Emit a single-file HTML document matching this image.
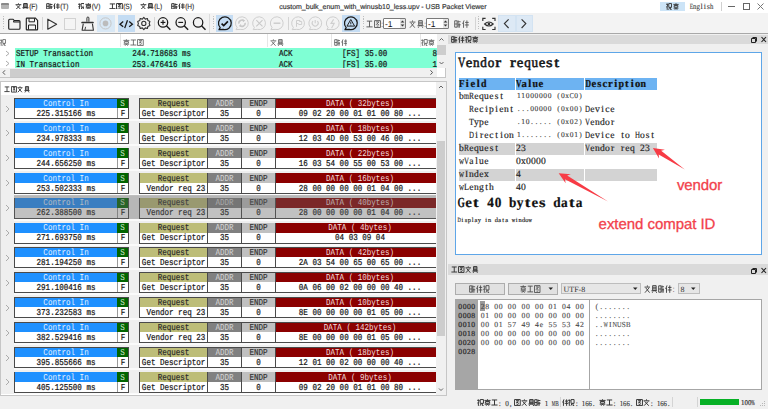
<!DOCTYPE html><html><head><meta charset="utf-8"><style>
*{margin:0;padding:0;box-sizing:border-box}
html,body{width:768px;height:409px;overflow:hidden;background:#f0f0f0;font-family:"Liberation Sans",sans-serif;position:relative;text-rendering:geometricPrecision}
.ab{position:absolute}
.tx{white-space:pre}
.cj{opacity:.8;background:
  linear-gradient(var(--c),var(--c)) 0 10%/100% 1px no-repeat,
  linear-gradient(var(--c),var(--c)) 0 50%/100% 1px no-repeat,
  linear-gradient(var(--c),var(--c)) 0 100%/100% 1px no-repeat,
  linear-gradient(var(--c),var(--c)) 15% 0/1px 100% no-repeat,
  linear-gradient(var(--c),var(--c)) 55% 0/1px 100% no-repeat,
  linear-gradient(var(--c),var(--c)) 90% 0/1px 100% no-repeat}
</style></head><body>
<div class="ab" style="left:0px;top:0px;width:768px;height:13px;background:#fff;"></div>
<div class="ab" style="left:1px;top:3px;width:8px;height:6px;background:#b4b4b4;border-radius:1px;border-top:2px solid #8a8a8a"></div>
<svg class="ab" style="left:15.00px;top:2.60px" width="6.9" height="6.6" viewBox="0 0 10 10" preserveAspectRatio="none"><path d="M5 0.5v1.6M0.8 2.6h8.4M2.6 3.6L8.2 9.6M7.4 3.6L1.4 9.6" fill="none" stroke="#333" stroke-width="1.45"/></svg>
<svg class="ab" style="left:22.10px;top:2.60px" width="6.9" height="6.6" viewBox="0 0 10 10" preserveAspectRatio="none"><path d="M2.4 0.8h5.2v6h-5.2zM2.4 2.8h5.2M2.4 4.8h5.2M0.6 7.2h8.8M3.2 8.2L1.2 9.8M6.8 8.2L8.8 9.8" fill="none" stroke="#333" stroke-width="1.45"/></svg>
<svg class="ab" style="left:0;top:0;overflow:visible" width="1" height="1"><text transform="translate(29.20 8.60) scale(0.86 1)" fill="#3a3a3a" text-anchor="start" style="font-family:'Liberation Sans',sans-serif;font-size:7.6px;font-weight:normal;white-space:pre;stroke:#3a3a3a;stroke-width:0.16px;paint-order:normal;">(F)</text></svg>
<svg class="ab" style="left:46.00px;top:2.60px" width="6.9" height="6.6" viewBox="0 0 10 10" preserveAspectRatio="none"><path d="M1 1h3.4v8H1zM1 5h3.4M5.8 0.5v9M5.8 2.2h3.6M7.6 4.2v5.4M5.8 6h3.8" fill="none" stroke="#333" stroke-width="1.45"/></svg>
<svg class="ab" style="left:53.10px;top:2.60px" width="6.9" height="6.6" viewBox="0 0 10 10" preserveAspectRatio="none"><path d="M3 0.5L1 5M2.2 3.2V9.8M4.4 3h5.2M4 6.2h5.8M7 0.5V9.8" fill="none" stroke="#333" stroke-width="1.45"/></svg>
<svg class="ab" style="left:0;top:0;overflow:visible" width="1" height="1"><text transform="translate(60.20 8.60) scale(0.86 1)" fill="#3a3a3a" text-anchor="start" style="font-family:'Liberation Sans',sans-serif;font-size:7.6px;font-weight:normal;white-space:pre;stroke:#3a3a3a;stroke-width:0.16px;paint-order:normal;">(T)</text></svg>
<svg class="ab" style="left:77.50px;top:2.60px" width="6.9" height="6.6" viewBox="0 0 10 10" preserveAspectRatio="none"><path d="M1.8 0.4v1.2M0.4 2.2h3L1 6.2M2 4.6v5.2M4.6 0.8h4.6v5.4h-4.6zM6.2 6.2L4.4 9.6M7.6 6.2v3.2h1.8" fill="none" stroke="#333" stroke-width="1.45"/></svg>
<svg class="ab" style="left:84.60px;top:2.60px" width="6.9" height="6.6" viewBox="0 0 10 10" preserveAspectRatio="none"><path d="M0.6 2h8.8M5 0.4v1.6M2 3.6h6v2.4H2zM1 7.4h8M3 9.6L5 7.6L7 9.6" fill="none" stroke="#333" stroke-width="1.45"/></svg>
<svg class="ab" style="left:0;top:0;overflow:visible" width="1" height="1"><text transform="translate(91.70 8.60) scale(0.86 1)" fill="#3a3a3a" text-anchor="start" style="font-family:'Liberation Sans',sans-serif;font-size:7.6px;font-weight:normal;white-space:pre;stroke:#3a3a3a;stroke-width:0.16px;paint-order:normal;">(V)</text></svg>
<svg class="ab" style="left:109.00px;top:2.60px" width="6.9" height="6.6" viewBox="0 0 10 10" preserveAspectRatio="none"><path d="M1.2 1.4h7.6M5 1.4v7.2M0.6 8.6h8.8" fill="none" stroke="#333" stroke-width="1.45"/></svg>
<svg class="ab" style="left:116.10px;top:2.60px" width="6.9" height="6.6" viewBox="0 0 10 10" preserveAspectRatio="none"><path d="M0.8 0.8h8.4v8.6h-8.4zM3 2.4h4L3 6M4 4.2L7.2 6.4M3.8 7.6h2.6" fill="none" stroke="#333" stroke-width="1.45"/></svg>
<svg class="ab" style="left:0;top:0;overflow:visible" width="1" height="1"><text transform="translate(123.20 8.60) scale(0.86 1)" fill="#3a3a3a" text-anchor="start" style="font-family:'Liberation Sans',sans-serif;font-size:7.6px;font-weight:normal;white-space:pre;stroke:#3a3a3a;stroke-width:0.16px;paint-order:normal;">(S)</text></svg>
<svg class="ab" style="left:140.00px;top:2.60px" width="6.9" height="6.6" viewBox="0 0 10 10" preserveAspectRatio="none"><path d="M5 0.5v1.6M0.8 2.6h8.4M2.6 3.6L8.2 9.6M7.4 3.6L1.4 9.6" fill="none" stroke="#333" stroke-width="1.45"/></svg>
<svg class="ab" style="left:147.10px;top:2.60px" width="6.9" height="6.6" viewBox="0 0 10 10" preserveAspectRatio="none"><path d="M2.4 0.8h5.2v6h-5.2zM2.4 2.8h5.2M2.4 4.8h5.2M0.6 7.2h8.8M3.2 8.2L1.2 9.8M6.8 8.2L8.8 9.8" fill="none" stroke="#333" stroke-width="1.45"/></svg>
<svg class="ab" style="left:0;top:0;overflow:visible" width="1" height="1"><text transform="translate(154.20 8.60) scale(0.86 1)" fill="#3a3a3a" text-anchor="start" style="font-family:'Liberation Sans',sans-serif;font-size:7.6px;font-weight:normal;white-space:pre;stroke:#3a3a3a;stroke-width:0.16px;paint-order:normal;">(L)</text></svg>
<svg class="ab" style="left:171.00px;top:2.60px" width="6.9" height="6.6" viewBox="0 0 10 10" preserveAspectRatio="none"><path d="M1 1h3.4v8H1zM1 5h3.4M5.8 0.5v9M5.8 2.2h3.6M7.6 4.2v5.4M5.8 6h3.8" fill="none" stroke="#333" stroke-width="1.45"/></svg>
<svg class="ab" style="left:178.10px;top:2.60px" width="6.9" height="6.6" viewBox="0 0 10 10" preserveAspectRatio="none"><path d="M3 0.5L1 5M2.2 3.2V9.8M4.4 3h5.2M4 6.2h5.8M7 0.5V9.8" fill="none" stroke="#333" stroke-width="1.45"/></svg>
<svg class="ab" style="left:0;top:0;overflow:visible" width="1" height="1"><text transform="translate(185.20 8.60) scale(0.86 1)" fill="#3a3a3a" text-anchor="start" style="font-family:'Liberation Sans',sans-serif;font-size:7.6px;font-weight:normal;white-space:pre;stroke:#3a3a3a;stroke-width:0.16px;paint-order:normal;">(H)</text></svg>
<svg class="ab" style="left:0;top:0;overflow:visible" width="1" height="1"><text transform="translate(279.30 8.70) scale(1.0 1)" fill="#333" text-anchor="start" style="font-family:'Liberation Sans',sans-serif;font-size:7px;font-weight:normal;white-space:pre;stroke:#333;stroke-width:0.16px;paint-order:normal;">custom_bulk_enum_with_winusb10_less.upv - USB Packet Viewer</text></svg>
<div class="ab" style="left:660px;top:1.5px;width:25px;height:9.5px;background:#cce4f7;"></div>
<svg class="ab" style="left:666.00px;top:2.50px" width="6" height="7" viewBox="0 0 10 10" preserveAspectRatio="none"><path d="M1.8 0.4v1.2M0.4 2.2h3L1 6.2M2 4.6v5.2M4.6 0.8h4.6v5.4h-4.6zM6.2 6.2L4.4 9.6M7.6 6.2v3.2h1.8" fill="none" stroke="#333" stroke-width="1.4"/></svg>
<svg class="ab" style="left:672.50px;top:2.50px" width="6" height="7" viewBox="0 0 10 10" preserveAspectRatio="none"><path d="M0.6 2h8.8M5 0.4v1.6M2 3.6h6v2.4H2zM1 7.4h8M3 9.6L5 7.6L7 9.6" fill="none" stroke="#333" stroke-width="1.4"/></svg>
<svg class="ab" style="left:0;top:0;overflow:visible" width="1" height="1"><text x="701.50 704.87 708.24" y="8.80" fill="#3a3a3a" text-anchor="middle" style="font-family:'Liberation Serif',serif;font-size:8px;font-weight:normal;white-space:pre;stroke:#3a3a3a;stroke-width:0.1px;">lis</text><text transform="translate(691.38 8.80) scale(0.690 1)" fill="#3a3a3a" text-anchor="middle" style="font-family:'Liberation Serif',serif;font-size:8px;font-weight:normal;white-space:pre;stroke:#3a3a3a;stroke-width:0.1px;">E</text><text transform="translate(694.75 8.80) scale(0.843 1)" fill="#3a3a3a" text-anchor="middle" style="font-family:'Liberation Serif',serif;font-size:8px;font-weight:normal;white-space:pre;stroke:#3a3a3a;stroke-width:0.1px;">n</text><text transform="translate(698.12 8.80) scale(0.843 1)" fill="#3a3a3a" text-anchor="middle" style="font-family:'Liberation Serif',serif;font-size:8px;font-weight:normal;white-space:pre;stroke:#3a3a3a;stroke-width:0.1px;">g</text><text transform="translate(711.61 8.80) scale(0.843 1)" fill="#3a3a3a" text-anchor="middle" style="font-family:'Liberation Serif',serif;font-size:8px;font-weight:normal;white-space:pre;stroke:#3a3a3a;stroke-width:0.1px;">h</text></svg>
<div class="ab" style="left:720.5px;top:2px;width:1px;height:9px;background:#d0d0d0;"></div>
<div class="ab" style="left:728px;top:6px;width:6.5px;height:1px;background:#666;"></div>
<div class="ab" style="left:743px;top:3px;width:6.5px;height:6.5px;background:transparent;border:1px solid #666"></div>
<svg class="ab" style="left:757px;top:2.5px" width="7" height="7"><path d="M0.5 0.5L6.5 6.5M6.5 0.5L0.5 6.5" stroke="#777" stroke-width="1"/></svg>
<div class="ab" style="left:0px;top:13px;width:768px;height:20px;background:#f3f3f3;"></div>
<div class="ab" style="left:0px;top:33px;width:768px;height:1px;background:#a8a8a8;"></div>
<div class="ab" style="left:2.5px;top:16px;width:1px;height:15px;background:repeating-linear-gradient(#c0c0c0 0 1px,transparent 1px 2.5px);"></div>
<div class="ab" style="left:42px;top:17px;width:1px;height:13px;background:#d4d4d4;"></div>
<div class="ab" style="left:154px;top:17px;width:1px;height:13px;background:#d4d4d4;"></div>
<div class="ab" style="left:213px;top:16px;width:1px;height:15px;background:repeating-linear-gradient(#c0c0c0 0 1px,transparent 1px 2.5px);"></div>
<div class="ab" style="left:287.5px;top:17px;width:1px;height:13px;background:#d4d4d4;"></div>
<div class="ab" style="left:363px;top:16px;width:1px;height:15px;background:repeating-linear-gradient(#c0c0c0 0 1px,transparent 1px 2.5px);"></div>
<div class="ab" style="left:474.5px;top:17px;width:1px;height:13px;background:#d4d4d4;"></div>
<div class="ab" style="left:477.5px;top:16px;width:1px;height:15px;background:repeating-linear-gradient(#c0c0c0 0 1px,transparent 1px 2.5px);"></div>
<div class="ab" style="left:209px;top:14px;width:1px;height:19px;background:#dcdcdc;"></div>
<div class="ab" style="left:97px;top:15px;width:18px;height:17px;background:#d9e8f5;"></div>
<div class="ab" style="left:118px;top:15px;width:17px;height:17px;background:#c4dcf3;"></div>
<div class="ab" style="left:216px;top:15px;width:17px;height:17px;background:#c4dcf3;"></div>
<div class="ab" style="left:342px;top:15px;width:18px;height:17px;background:#c4dcf3;"></div>
<div class="ab" style="left:498px;top:15px;width:17.5px;height:17px;background:#dde9f5;border:1px solid #d3e3f2;"></div>
<div class="ab" style="left:515.5px;top:15px;width:17.5px;height:17px;background:#dde9f5;border:1px solid #d3e3f2;"></div>
<svg class="ab" style="left:0;top:0" width="768" height="409"><path d="M8.7 20.2q0-1 1-1h3.3l1.3 1.4h4.7q1 0 1 1v6.6q0 1-1 1h-9.3q-1 0-1-1z" fill="none" stroke="#222" stroke-width="1.15"/><path d="M14.3 20.6l-1 1.4h6.5" fill="none" stroke="#222" stroke-width="1"/><path d="M26.3 18.8q0-.6.6-.6h8.5l2.2 2.2v8.8q0 .6-.6.6h-10.1q-.6 0-.6-.6z" fill="none" stroke="#222" stroke-width="1.15"/><path d="M29 18.3v3.5h5.5v-3.5" fill="none" stroke="#222" stroke-width="1"/><path d="M28.5 29.5v-4.5h7v4.5" fill="none" stroke="#222" stroke-width="1"/><path d="M47.8 19.2v10l8.8-5z" fill="none" stroke="#333" stroke-width="1.15" stroke-linejoin="round"/><rect x="64.5" y="18.5" width="11" height="11" fill="#f4f4f4" stroke="#d2d2d2" stroke-width="1"/><path d="M86.9 21.7V18.1q0-1.1 1-1.1t1 1.1V21.7" fill="none" stroke="#333" stroke-width="1"/><path d="M82.1 22.5H93" stroke="#333" stroke-width="1.7" stroke-linecap="round"/><path d="M83.3 23.6L82.1 30.2H93.4L92.4 23.6" fill="none" stroke="#333" stroke-width="1.1" stroke-linejoin="round"/><path d="M85.6 26.8L84.9 30" stroke="#333" stroke-width="0.9"/><circle cx="105.5" cy="23.4" r="5.6" fill="none" stroke="#c6c6c6" stroke-width="1"/><circle cx="105.5" cy="23.4" r="2.8" fill="#bcbcbc"/><path d="M123.2 21.6l-3.2 2.6 3.2 2.6M129.2 21.6l3.2 2.6-3.2 2.6M127.5 20.3l-2.8 7.8" fill="none" stroke="#1a1a1a" stroke-width="1.3"/><circle cx="143.8" cy="23.4" r="2.1" fill="none" stroke="#333" stroke-width="1.1"/><path d="M143.8 17.4l1.5 1.7 2.1-.6.5 2.1 2 1-.7 1.9.7 1.9-2 1-.5 2.1-2.1-.6-1.5 1.7-1.5-1.7-2.1.6-.5-2.1-2-1 .7-1.9-.7-1.9 2-1 .5-2.1 2.1.6z" fill="none" stroke="#333" stroke-width="1.1" stroke-linejoin="round"/><circle cx="163" cy="22.4" r="4.7" fill="none" stroke="#1a1a1a" stroke-width="1.25"/><path d="M166.4 25.799999999999997l4 4" stroke="#1a1a1a" stroke-width="1.4"/><path d="M160.6 22.4h4.8" stroke="#1a1a1a" stroke-width="1.15"/><path d="M163 20v4.8" stroke="#1a1a1a" stroke-width="1.15"/><circle cx="180.7" cy="22.4" r="4.7" fill="none" stroke="#1a1a1a" stroke-width="1.25"/><path d="M184.1 25.799999999999997l4 4" stroke="#1a1a1a" stroke-width="1.4"/><path d="M178.29999999999998 22.4h4.8" stroke="#1a1a1a" stroke-width="1.15"/><circle cx="198.1" cy="22.4" r="4.7" fill="none" stroke="#1a1a1a" stroke-width="1.25"/><path d="M201.5 25.799999999999997l4 4" stroke="#1a1a1a" stroke-width="1.4"/><path d="M220.20000000000002 27.6 A6.4 6.4 0 1 1 223.20000000000002 29.4 L219.0 29.6 Z" fill="none" stroke="#1a1a1a" stroke-width="1.25" stroke-linejoin="round"/><path d="M221.6 23.6l2.1 2 4.2-4.2" fill="none" stroke="#111" stroke-width="1.7"/><path d="M237.20000000000002 27.6 A6.4 6.4 0 1 1 240.20000000000002 29.4 L236.0 29.6 Z" fill="none" stroke="#cfcfcf" stroke-width="1.0" stroke-linejoin="round"/><path d="M254.4 27.6 A6.4 6.4 0 1 1 257.4 29.4 L253.2 29.6 Z" fill="none" stroke="#cfcfcf" stroke-width="1.0" stroke-linejoin="round"/><path d="M272.09999999999997 27.6 A6.4 6.4 0 1 1 275.09999999999997 29.4 L270.9 29.6 Z" fill="none" stroke="#cfcfcf" stroke-width="1.0" stroke-linejoin="round"/><path d="M293.4 27.6 A6.4 6.4 0 1 1 296.4 29.4 L292.2 29.6 Z" fill="none" stroke="#cfcfcf" stroke-width="1.0" stroke-linejoin="round"/><path d="M310.59999999999997 27.6 A6.4 6.4 0 1 1 313.59999999999997 29.4 L309.4 29.6 Z" fill="none" stroke="#cfcfcf" stroke-width="1.0" stroke-linejoin="round"/><path d="M328.09999999999997 27.6 A6.4 6.4 0 1 1 331.09999999999997 29.4 L326.9 29.6 Z" fill="none" stroke="#cfcfcf" stroke-width="1.0" stroke-linejoin="round"/><path d="M238.8 23.6a3.2 3.2 0 0 1 5.2-2.8M245.2 22.8a3.2 3.2 0 0 1-5.2 2.8" fill="none" stroke="#c8c8c8" stroke-width="1.6"/><path d="M242.6 19.3l2.6 1.2-2.2 1.8zM241.4 27.1l-2.6-1.2 2.2-1.8z" fill="#c8c8c8"/><path d="M256.3 20.1l6.2 6.2M262.5 20.1l-6.2 6.2" stroke="#c8c8c8" stroke-width="1.05"/><path d="M273.6 23.2h6.8" stroke="#c8c8c8" stroke-width="1.3"/><path d="M296.5 26.8v-6.3h3.5l-.5 1h2.2v3h-3l-.5-1h-1.7" fill="none" stroke="#cfcfcf" stroke-width="1"/><path d="M313 21a3 3 0 1 0 4.4 0M315.2 20v3.2" fill="none" stroke="#cfcfcf" stroke-width="1.1"/><path d="M333.6 19.4l-2.6 4h3.2l-2.6 4.6" fill="none" stroke="#cfcfcf" stroke-width="1.1"/><path d="M346.2 27.6 A6.4 6.4 0 1 1 349.2 29.4 L345.0 29.6 Z" fill="none" stroke="#1a1a1a" stroke-width="1.25" stroke-linejoin="round"/><path d="M350.8 19.5l3.8 6.6h-7.6z" fill="none" stroke="#1a1a1a" stroke-width="0.95" stroke-linejoin="round"/><path d="M350.8 21.8v2.2M350.8 24.7v0.8" stroke="#1a1a1a" stroke-width="0.9"/><path d="M482.8 21v-2.7h2.8M492.2 18.3h2.8v2.7M495 26.8v2.7h-2.8M485.6 29.5h-2.8v-2.7" fill="none" stroke="#333" stroke-width="1.15"/><path d="M484.6 24q4.3-4 8.6 0q-4.3 4-8.6 0z" fill="none" stroke="#333" stroke-width="1.1"/><circle cx="488.9" cy="24" r="1.3" fill="#333"/><path d="M508.6 19.4l-4.2 4.2 4.2 4.4" fill="none" stroke="#333" stroke-width="1.15"/><path d="M521.6 19.4l4.2 4.2-4.2 4.4" fill="none" stroke="#333" stroke-width="1.15"/></svg>
<svg class="ab" style="left:366.00px;top:19.50px" width="7" height="8" viewBox="0 0 10 10" preserveAspectRatio="none"><path d="M1.2 1.4h7.6M5 1.4v7.2M0.6 8.6h8.8" fill="none" stroke="#555" stroke-width="1.2"/></svg>
<svg class="ab" style="left:373.50px;top:19.50px" width="7" height="8" viewBox="0 0 10 10" preserveAspectRatio="none"><path d="M0.8 0.8h8.4v8.6h-8.4zM3 2.4h4L3 6M4 4.2L7.2 6.4M3.8 7.6h2.6" fill="none" stroke="#555" stroke-width="1.2"/></svg>
<svg class="ab" style="left:0;top:0;overflow:visible" width="1" height="1"><text transform="translate(381.00 27.00) scale(1.0 1)" fill="#555" text-anchor="start" style="font-family:'Liberation Sans',sans-serif;font-size:8px;font-weight:normal;white-space:pre;">:</text></svg>
<svg class="ab" style="left:409.00px;top:19.50px" width="7" height="8" viewBox="0 0 10 10" preserveAspectRatio="none"><path d="M5 0.5v1.6M0.8 2.6h8.4M2.6 3.6L8.2 9.6M7.4 3.6L1.4 9.6" fill="none" stroke="#555" stroke-width="1.2"/></svg>
<svg class="ab" style="left:416.50px;top:19.50px" width="7" height="8" viewBox="0 0 10 10" preserveAspectRatio="none"><path d="M2.4 0.8h5.2v6h-5.2zM2.4 2.8h5.2M2.4 4.8h5.2M0.6 7.2h8.8M3.2 8.2L1.2 9.8M6.8 8.2L8.8 9.8" fill="none" stroke="#555" stroke-width="1.2"/></svg>
<svg class="ab" style="left:0;top:0;overflow:visible" width="1" height="1"><text transform="translate(424.00 27.00) scale(1.0 1)" fill="#555" text-anchor="start" style="font-family:'Liberation Sans',sans-serif;font-size:8px;font-weight:normal;white-space:pre;">:</text></svg>
<div class="ab" style="left:383px;top:18px;width:23px;height:11px;background:#fff;border:1px solid #7a7a7a;border-radius:1px"></div>
<div class="ab" style="left:400px;top:19px;width:5px;height:9px;background:#e4e4e4;"></div>
<svg class="ab" style="left:0;top:0;overflow:visible" width="1" height="1"><text transform="translate(385.00 26.60) scale(1.0 1)" fill="#111" text-anchor="start" style="font-family:'Liberation Sans',sans-serif;font-size:8.5px;font-weight:normal;white-space:pre;">-1</text></svg>
<svg class="ab" style="left:400px;top:19px" width="5" height="9"><path d="M0.6 3.6l1.9-2 1.9 2zM0.6 5.4l1.9 2 1.9-2z" fill="#333"/></svg>
<div class="ab" style="left:426px;top:18px;width:23px;height:11px;background:#fff;border:1px solid #7a7a7a;border-radius:1px"></div>
<div class="ab" style="left:443px;top:19px;width:5px;height:9px;background:#e4e4e4;"></div>
<svg class="ab" style="left:0;top:0;overflow:visible" width="1" height="1"><text transform="translate(428.00 26.60) scale(1.0 1)" fill="#111" text-anchor="start" style="font-family:'Liberation Sans',sans-serif;font-size:8.5px;font-weight:normal;white-space:pre;">-1</text></svg>
<svg class="ab" style="left:443px;top:19px" width="5" height="9"><path d="M0.6 3.6l1.9-2 1.9 2zM0.6 5.4l1.9 2 1.9-2z" fill="#333"/></svg>
<svg class="ab" style="left:454.00px;top:19.50px" width="7" height="8" viewBox="0 0 10 10" preserveAspectRatio="none"><path d="M1 1h3.4v8H1zM1 5h3.4M5.8 0.5v9M5.8 2.2h3.6M7.6 4.2v5.4M5.8 6h3.8" fill="none" stroke="#555" stroke-width="1.2"/></svg>
<svg class="ab" style="left:461.50px;top:19.50px" width="7" height="8" viewBox="0 0 10 10" preserveAspectRatio="none"><path d="M3 0.5L1 5M2.2 3.2V9.8M4.4 3h5.2M4 6.2h5.8M7 0.5V9.8" fill="none" stroke="#555" stroke-width="1.2"/></svg>
<div class="ab" style="left:0px;top:34px;width:446px;height:44px;background:#fff;border-right:1px solid #c6c6c6;border-bottom:1px solid #c6c6c6"></div>
<div class="ab" style="left:120px;top:34px;width:1px;height:13px;background:#e6e6e6;"></div>
<div class="ab" style="left:267px;top:34px;width:1px;height:13px;background:#e6e6e6;"></div>
<div class="ab" style="left:331px;top:34px;width:1px;height:13px;background:#e6e6e6;"></div>
<div class="ab" style="left:419.5px;top:34px;width:1px;height:13px;background:#e6e6e6;"></div>
<svg class="ab" style="left:0.00px;top:39.00px" width="6" height="7" viewBox="0 0 10 10" preserveAspectRatio="none"><path d="M1.8 0.4v1.2M0.4 2.2h3L1 6.2M2 4.6v5.2M4.6 0.8h4.6v5.4h-4.6zM6.2 6.2L4.4 9.6M7.6 6.2v3.2h1.8" fill="none" stroke="#555" stroke-width="1.15"/></svg>
<svg class="ab" style="left:123.00px;top:39.00px" width="6.8" height="7" viewBox="0 0 10 10" preserveAspectRatio="none"><path d="M0.6 2h8.8M5 0.4v1.6M2 3.6h6v2.4H2zM1 7.4h8M3 9.6L5 7.6L7 9.6" fill="none" stroke="#555" stroke-width="1.15"/></svg>
<svg class="ab" style="left:130.00px;top:39.00px" width="6.8" height="7" viewBox="0 0 10 10" preserveAspectRatio="none"><path d="M1.2 1.4h7.6M5 1.4v7.2M0.6 8.6h8.8" fill="none" stroke="#555" stroke-width="1.15"/></svg>
<svg class="ab" style="left:137.00px;top:39.00px" width="6.8" height="7" viewBox="0 0 10 10" preserveAspectRatio="none"><path d="M0.8 0.8h8.4v8.6h-8.4zM3 2.4h4L3 6M4 4.2L7.2 6.4M3.8 7.6h2.6" fill="none" stroke="#555" stroke-width="1.15"/></svg>
<svg class="ab" style="left:270.00px;top:39.00px" width="6.8" height="7" viewBox="0 0 10 10" preserveAspectRatio="none"><path d="M5 0.5v1.6M0.8 2.6h8.4M2.6 3.6L8.2 9.6M7.4 3.6L1.4 9.6" fill="none" stroke="#555" stroke-width="1.15"/></svg>
<svg class="ab" style="left:277.00px;top:39.00px" width="6.8" height="7" viewBox="0 0 10 10" preserveAspectRatio="none"><path d="M2.4 0.8h5.2v6h-5.2zM2.4 2.8h5.2M2.4 4.8h5.2M0.6 7.2h8.8M3.2 8.2L1.2 9.8M6.8 8.2L8.8 9.8" fill="none" stroke="#555" stroke-width="1.15"/></svg>
<svg class="ab" style="left:333.50px;top:39.00px" width="6.8" height="7" viewBox="0 0 10 10" preserveAspectRatio="none"><path d="M1 1h3.4v8H1zM1 5h3.4M5.8 0.5v9M5.8 2.2h3.6M7.6 4.2v5.4M5.8 6h3.8" fill="none" stroke="#555" stroke-width="1.15"/></svg>
<svg class="ab" style="left:340.50px;top:39.00px" width="6.8" height="7" viewBox="0 0 10 10" preserveAspectRatio="none"><path d="M3 0.5L1 5M2.2 3.2V9.8M4.4 3h5.2M4 6.2h5.8M7 0.5V9.8" fill="none" stroke="#555" stroke-width="1.15"/></svg>
<svg class="ab" style="left:421.00px;top:39.00px" width="6.8" height="7" viewBox="0 0 10 10" preserveAspectRatio="none"><path d="M1.8 0.4v1.2M0.4 2.2h3L1 6.2M2 4.6v5.2M4.6 0.8h4.6v5.4h-4.6zM6.2 6.2L4.4 9.6M7.6 6.2v3.2h1.8" fill="none" stroke="#555" stroke-width="1.15"/></svg>
<svg class="ab" style="left:428.00px;top:39.00px" width="6.8" height="7" viewBox="0 0 10 10" preserveAspectRatio="none"><path d="M0.6 2h8.8M5 0.4v1.6M2 3.6h6v2.4H2zM1 7.4h8M3 9.6L5 7.6L7 9.6" fill="none" stroke="#555" stroke-width="1.15"/></svg>
<div class="ab" style="left:15px;top:48px;width:422px;height:20px;background:#7fffd4;"></div>
<svg class="ab" style="left:5px;top:50px" width="5" height="7"><path d="M1 1l3 2.5-3 2.5" fill="none" stroke="#a0a0a0" stroke-width="0.9"/></svg>
<svg class="ab" style="left:0;top:0;overflow:visible" width="1" height="1"><text transform="translate(16.00 56.00) scale(0.838888888888889 1)" fill="#1a1a1a" text-anchor="start" style="font-family:'Liberation Mono',monospace;font-size:9.0px;font-weight:normal;white-space:pre;stroke:#1a1a1a;stroke-width:0.24px;paint-order:normal;">SETUP Transaction</text></svg>
<svg class="ab" style="left:0;top:0;overflow:visible" width="1" height="1"><text transform="translate(132.20 56.00) scale(0.838888888888889 1)" fill="#1a1a1a" text-anchor="start" style="font-family:'Liberation Mono',monospace;font-size:9.0px;font-weight:normal;white-space:pre;stroke:#1a1a1a;stroke-width:0.24px;paint-order:normal;">244.718683 ms</text></svg>
<svg class="ab" style="left:0;top:0;overflow:visible" width="1" height="1"><text transform="translate(279.00 56.00) scale(0.838888888888889 1)" fill="#1a1a1a" text-anchor="start" style="font-family:'Liberation Mono',monospace;font-size:9.0px;font-weight:normal;white-space:pre;stroke:#1a1a1a;stroke-width:0.24px;paint-order:normal;">ACK</text></svg>
<svg class="ab" style="left:0;top:0;overflow:visible" width="1" height="1"><text transform="translate(342.00 56.00) scale(0.838888888888889 1)" fill="#1a1a1a" text-anchor="start" style="font-family:'Liberation Mono',monospace;font-size:9.0px;font-weight:normal;white-space:pre;stroke:#1a1a1a;stroke-width:0.24px;paint-order:normal;">[FS] 35.00</text></svg>
<svg class="ab" style="left:0;top:0;overflow:visible" width="1" height="1"><text transform="translate(432.50 56.00) scale(0.838888888888889 1)" fill="#1a1a1a" text-anchor="start" style="font-family:'Liberation Mono',monospace;font-size:9.0px;font-weight:normal;white-space:pre;stroke:#1a1a1a;stroke-width:0.24px;paint-order:normal;">8</text></svg>
<svg class="ab" style="left:5px;top:60px" width="5" height="7"><path d="M1 1l3 2.5-3 2.5" fill="none" stroke="#a0a0a0" stroke-width="0.9"/></svg>
<svg class="ab" style="left:0;top:0;overflow:visible" width="1" height="1"><text transform="translate(16.00 66.60) scale(0.838888888888889 1)" fill="#1a1a1a" text-anchor="start" style="font-family:'Liberation Mono',monospace;font-size:9.0px;font-weight:normal;white-space:pre;stroke:#1a1a1a;stroke-width:0.24px;paint-order:normal;">IN Transaction</text></svg>
<svg class="ab" style="left:0;top:0;overflow:visible" width="1" height="1"><text transform="translate(132.20 66.60) scale(0.838888888888889 1)" fill="#1a1a1a" text-anchor="start" style="font-family:'Liberation Mono',monospace;font-size:9.0px;font-weight:normal;white-space:pre;stroke:#1a1a1a;stroke-width:0.24px;paint-order:normal;">253.476416 ms</text></svg>
<svg class="ab" style="left:0;top:0;overflow:visible" width="1" height="1"><text transform="translate(279.00 66.60) scale(0.838888888888889 1)" fill="#1a1a1a" text-anchor="start" style="font-family:'Liberation Mono',monospace;font-size:9.0px;font-weight:normal;white-space:pre;stroke:#1a1a1a;stroke-width:0.24px;paint-order:normal;">ACK</text></svg>
<svg class="ab" style="left:0;top:0;overflow:visible" width="1" height="1"><text transform="translate(342.00 66.60) scale(0.838888888888889 1)" fill="#1a1a1a" text-anchor="start" style="font-family:'Liberation Mono',monospace;font-size:9.0px;font-weight:normal;white-space:pre;stroke:#1a1a1a;stroke-width:0.24px;paint-order:normal;">[FS] 35.00</text></svg>
<svg class="ab" style="left:0;top:0;overflow:visible" width="1" height="1"><text transform="translate(432.50 66.60) scale(0.838888888888889 1)" fill="#1a1a1a" text-anchor="start" style="font-family:'Liberation Mono',monospace;font-size:9.0px;font-weight:normal;white-space:pre;stroke:#1a1a1a;stroke-width:0.24px;paint-order:normal;">1</text></svg>
<div class="ab" style="left:437px;top:34px;width:9px;height:34px;background:#f0f0f0;"></div>
<div class="ab" style="left:437px;top:45px;width:9px;height:10px;background:#cdcdcd;"></div>
<svg class="ab" style="left:437px;top:34px" width="9" height="34"><path d="M2.5 6.5l2-2 2 2M2.5 28l2 2 2-2" fill="none" stroke="#555" stroke-width="0.9"/></svg>
<div class="ab" style="left:0px;top:68px;width:437px;height:9px;background:#f0f0f0;"></div>
<div class="ab" style="left:10px;top:69px;width:340px;height:8px;background:#cdcdcd;"></div>
<svg class="ab" style="left:0;top:68px" width="437" height="9"><path d="M5 2.3l-2 2.2 2 2.2M430.5 2.3l2 2.2-2 2.2" fill="none" stroke="#444" stroke-width="0.9"/></svg>
<div class="ab" style="left:0px;top:81px;width:447px;height:315px;background:#fff;border:1px solid #c6c6c6"></div>
<svg class="ab" style="left:4.00px;top:86.00px" width="6" height="6.5" viewBox="0 0 10 10" preserveAspectRatio="none"><path d="M1.2 1.4h7.6M5 1.4v7.2M0.6 8.6h8.8" fill="none" stroke="#333" stroke-width="1.4"/></svg>
<svg class="ab" style="left:10.50px;top:86.00px" width="6" height="6.5" viewBox="0 0 10 10" preserveAspectRatio="none"><path d="M0.8 0.8h8.4v8.6h-8.4zM3 2.4h4L3 6M4 4.2L7.2 6.4M3.8 7.6h2.6" fill="none" stroke="#333" stroke-width="1.4"/></svg>
<svg class="ab" style="left:17.00px;top:86.00px" width="6" height="6.5" viewBox="0 0 10 10" preserveAspectRatio="none"><path d="M5 0.5v1.6M0.8 2.6h8.4M2.6 3.6L8.2 9.6M7.4 3.6L1.4 9.6" fill="none" stroke="#333" stroke-width="1.4"/></svg>
<svg class="ab" style="left:23.50px;top:86.00px" width="6" height="6.5" viewBox="0 0 10 10" preserveAspectRatio="none"><path d="M2.4 0.8h5.2v6h-5.2zM2.4 2.8h5.2M2.4 4.8h5.2M0.6 7.2h8.8M3.2 8.2L1.2 9.8M6.8 8.2L8.8 9.8" fill="none" stroke="#333" stroke-width="1.4"/></svg>
<div class="ab" style="left:1px;top:95px;width:435px;height:299px;overflow:hidden;background:#efefef">
<div class="ab" style="left:13px;top:24.0px;width:430px;height:2px;background:#fafafa;"></div>
<svg class="ab" style="left:4px;top:9.5px" width="5" height="8"><path d="M1 1l3 3-3 3" fill="none" stroke="#a4a4a4" stroke-width="0.9"/></svg>
<div class="ab" style="left:13px;top:3.0px;width:115px;height:21px;background:#fff;border:1px solid #4a4a4a"></div>
<div class="ab" style="left:14px;top:3.5px;width:102px;height:9.5px;background:#1e90ff;"></div>
<div class="ab" style="left:116px;top:3.5px;width:11px;height:9.5px;background:#006400;"></div>
<div class="ab" style="left:116px;top:13.0px;width:1px;height:10px;background:#9a9a9a;"></div>
<svg class="ab" style="left:0;top:0;overflow:visible" width="1" height="1"><text transform="translate(65.00 10.80) scale(0.838888888888889 1)" fill="#e6f3ff" text-anchor="middle" style="font-family:'Liberation Mono',monospace;font-size:9.0px;font-weight:normal;white-space:pre;">Control In</text></svg>
<svg class="ab" style="left:0;top:0;overflow:visible" width="1" height="1"><text transform="translate(121.50 10.80) scale(0.838888888888889 1)" fill="#d8ecd8" text-anchor="middle" style="font-family:'Liberation Mono',monospace;font-size:9.0px;font-weight:normal;white-space:pre;">S</text></svg>
<svg class="ab" style="left:0;top:0;overflow:visible" width="1" height="1"><text transform="translate(65.00 20.80) scale(0.838888888888889 1)" fill="#1a1a1a" text-anchor="middle" style="font-family:'Liberation Mono',monospace;font-size:9.0px;font-weight:normal;white-space:pre;stroke:#1a1a1a;stroke-width:0.24px;paint-order:normal;">225.315166 ms</text></svg>
<svg class="ab" style="left:0;top:0;overflow:visible" width="1" height="1"><text transform="translate(122.00 20.80) scale(0.838888888888889 1)" fill="#1a1a1a" text-anchor="middle" style="font-family:'Liberation Mono',monospace;font-size:9.0px;font-weight:normal;white-space:pre;stroke:#1a1a1a;stroke-width:0.24px;paint-order:normal;">F</text></svg>
<div class="ab" style="left:138px;top:3.0px;width:310px;height:21px;background:#fff;border:1px solid #4a4a4a"></div>
<div class="ab" style="left:139px;top:3.5px;width:67px;height:9.5px;background:#bdbd78;"></div>
<div class="ab" style="left:207px;top:3.5px;width:33px;height:9.5px;background:#808080;"></div>
<div class="ab" style="left:241px;top:3.5px;width:33px;height:9.5px;background:#c0c0c0;"></div>
<div class="ab" style="left:275px;top:3.5px;width:170px;height:9.5px;background:#8b0000;"></div>
<div class="ab" style="left:206px;top:3.0px;width:1px;height:21px;background:#4a4a4a;"></div>
<div class="ab" style="left:240px;top:3.0px;width:1px;height:21px;background:#4a4a4a;"></div>
<div class="ab" style="left:274px;top:3.0px;width:1px;height:21px;background:#4a4a4a;"></div>
<svg class="ab" style="left:0;top:0;overflow:visible" width="1" height="1"><text transform="translate(172.50 10.80) scale(0.838888888888889 1)" fill="#2a2a2a" text-anchor="middle" style="font-family:'Liberation Mono',monospace;font-size:9.0px;font-weight:normal;white-space:pre;stroke:#2a2a2a;stroke-width:0.2px;paint-order:normal;">Request</text></svg>
<svg class="ab" style="left:0;top:0;overflow:visible" width="1" height="1"><text transform="translate(223.50 10.80) scale(0.838888888888889 1)" fill="#d6d6d6" text-anchor="middle" style="font-family:'Liberation Mono',monospace;font-size:9.0px;font-weight:normal;white-space:pre;">ADDR</text></svg>
<svg class="ab" style="left:0;top:0;overflow:visible" width="1" height="1"><text transform="translate(257.50 10.80) scale(0.838888888888889 1)" fill="#333" text-anchor="middle" style="font-family:'Liberation Mono',monospace;font-size:9.0px;font-weight:normal;white-space:pre;stroke:#333;stroke-width:0.2px;paint-order:normal;">ENDP</text></svg>
<svg class="ab" style="left:0;top:0;overflow:visible" width="1" height="1"><text transform="translate(359.00 10.80) scale(0.838888888888889 1)" fill="#f2dede" text-anchor="middle" style="font-family:'Liberation Mono',monospace;font-size:9.0px;font-weight:normal;white-space:pre;">DATA ( 32bytes)</text></svg>
<svg class="ab" style="left:0;top:0;overflow:visible" width="1" height="1"><text transform="translate(204.30 20.80) scale(0.838888888888889 1)" fill="#1a1a1a" text-anchor="end" style="font-family:'Liberation Mono',monospace;font-size:9.0px;font-weight:normal;white-space:pre;stroke:#1a1a1a;stroke-width:0.24px;paint-order:normal;">Get Descriptor</text></svg>
<svg class="ab" style="left:0;top:0;overflow:visible" width="1" height="1"><text transform="translate(223.50 20.80) scale(0.838888888888889 1)" fill="#1a1a1a" text-anchor="middle" style="font-family:'Liberation Mono',monospace;font-size:9.0px;font-weight:normal;white-space:pre;stroke:#1a1a1a;stroke-width:0.24px;paint-order:normal;">35</text></svg>
<svg class="ab" style="left:0;top:0;overflow:visible" width="1" height="1"><text transform="translate(257.50 20.80) scale(0.838888888888889 1)" fill="#1a1a1a" text-anchor="middle" style="font-family:'Liberation Mono',monospace;font-size:9.0px;font-weight:normal;white-space:pre;stroke:#1a1a1a;stroke-width:0.24px;paint-order:normal;">0</text></svg>
<svg class="ab" style="left:0;top:0;overflow:visible" width="1" height="1"><text transform="translate(359.00 20.80) scale(0.838888888888889 1)" fill="#1a1a1a" text-anchor="middle" style="font-family:'Liberation Mono',monospace;font-size:9.0px;font-weight:normal;white-space:pre;stroke:#1a1a1a;stroke-width:0.24px;paint-order:normal;">09 02 20 00 01 01 00 80 ...</text></svg>
<div class="ab" style="left:13px;top:48.900000000000006px;width:430px;height:2px;background:#fafafa;"></div>
<svg class="ab" style="left:4px;top:34.400000000000006px" width="5" height="8"><path d="M1 1l3 3-3 3" fill="none" stroke="#a4a4a4" stroke-width="0.9"/></svg>
<div class="ab" style="left:13px;top:27.900000000000006px;width:115px;height:21px;background:#fff;border:1px solid #4a4a4a"></div>
<div class="ab" style="left:14px;top:28.400000000000006px;width:102px;height:9.5px;background:#1e90ff;"></div>
<div class="ab" style="left:116px;top:28.400000000000006px;width:11px;height:9.5px;background:#006400;"></div>
<div class="ab" style="left:116px;top:37.900000000000006px;width:1px;height:10px;background:#9a9a9a;"></div>
<svg class="ab" style="left:0;top:0;overflow:visible" width="1" height="1"><text transform="translate(65.00 35.70) scale(0.838888888888889 1)" fill="#e6f3ff" text-anchor="middle" style="font-family:'Liberation Mono',monospace;font-size:9.0px;font-weight:normal;white-space:pre;">Control In</text></svg>
<svg class="ab" style="left:0;top:0;overflow:visible" width="1" height="1"><text transform="translate(121.50 35.70) scale(0.838888888888889 1)" fill="#d8ecd8" text-anchor="middle" style="font-family:'Liberation Mono',monospace;font-size:9.0px;font-weight:normal;white-space:pre;">S</text></svg>
<svg class="ab" style="left:0;top:0;overflow:visible" width="1" height="1"><text transform="translate(65.00 45.70) scale(0.838888888888889 1)" fill="#1a1a1a" text-anchor="middle" style="font-family:'Liberation Mono',monospace;font-size:9.0px;font-weight:normal;white-space:pre;stroke:#1a1a1a;stroke-width:0.24px;paint-order:normal;">234.978333 ms</text></svg>
<svg class="ab" style="left:0;top:0;overflow:visible" width="1" height="1"><text transform="translate(122.00 45.70) scale(0.838888888888889 1)" fill="#1a1a1a" text-anchor="middle" style="font-family:'Liberation Mono',monospace;font-size:9.0px;font-weight:normal;white-space:pre;stroke:#1a1a1a;stroke-width:0.24px;paint-order:normal;">F</text></svg>
<div class="ab" style="left:138px;top:27.900000000000006px;width:310px;height:21px;background:#fff;border:1px solid #4a4a4a"></div>
<div class="ab" style="left:139px;top:28.400000000000006px;width:67px;height:9.5px;background:#bdbd78;"></div>
<div class="ab" style="left:207px;top:28.400000000000006px;width:33px;height:9.5px;background:#808080;"></div>
<div class="ab" style="left:241px;top:28.400000000000006px;width:33px;height:9.5px;background:#c0c0c0;"></div>
<div class="ab" style="left:275px;top:28.400000000000006px;width:170px;height:9.5px;background:#8b0000;"></div>
<div class="ab" style="left:206px;top:27.900000000000006px;width:1px;height:21px;background:#4a4a4a;"></div>
<div class="ab" style="left:240px;top:27.900000000000006px;width:1px;height:21px;background:#4a4a4a;"></div>
<div class="ab" style="left:274px;top:27.900000000000006px;width:1px;height:21px;background:#4a4a4a;"></div>
<svg class="ab" style="left:0;top:0;overflow:visible" width="1" height="1"><text transform="translate(172.50 35.70) scale(0.838888888888889 1)" fill="#2a2a2a" text-anchor="middle" style="font-family:'Liberation Mono',monospace;font-size:9.0px;font-weight:normal;white-space:pre;stroke:#2a2a2a;stroke-width:0.2px;paint-order:normal;">Request</text></svg>
<svg class="ab" style="left:0;top:0;overflow:visible" width="1" height="1"><text transform="translate(223.50 35.70) scale(0.838888888888889 1)" fill="#d6d6d6" text-anchor="middle" style="font-family:'Liberation Mono',monospace;font-size:9.0px;font-weight:normal;white-space:pre;">ADDR</text></svg>
<svg class="ab" style="left:0;top:0;overflow:visible" width="1" height="1"><text transform="translate(257.50 35.70) scale(0.838888888888889 1)" fill="#333" text-anchor="middle" style="font-family:'Liberation Mono',monospace;font-size:9.0px;font-weight:normal;white-space:pre;stroke:#333;stroke-width:0.2px;paint-order:normal;">ENDP</text></svg>
<svg class="ab" style="left:0;top:0;overflow:visible" width="1" height="1"><text transform="translate(359.00 35.70) scale(0.838888888888889 1)" fill="#f2dede" text-anchor="middle" style="font-family:'Liberation Mono',monospace;font-size:9.0px;font-weight:normal;white-space:pre;">DATA ( 18bytes)</text></svg>
<svg class="ab" style="left:0;top:0;overflow:visible" width="1" height="1"><text transform="translate(204.30 45.70) scale(0.838888888888889 1)" fill="#1a1a1a" text-anchor="end" style="font-family:'Liberation Mono',monospace;font-size:9.0px;font-weight:normal;white-space:pre;stroke:#1a1a1a;stroke-width:0.24px;paint-order:normal;">Get Descriptor</text></svg>
<svg class="ab" style="left:0;top:0;overflow:visible" width="1" height="1"><text transform="translate(223.50 45.70) scale(0.838888888888889 1)" fill="#1a1a1a" text-anchor="middle" style="font-family:'Liberation Mono',monospace;font-size:9.0px;font-weight:normal;white-space:pre;stroke:#1a1a1a;stroke-width:0.24px;paint-order:normal;">35</text></svg>
<svg class="ab" style="left:0;top:0;overflow:visible" width="1" height="1"><text transform="translate(257.50 45.70) scale(0.838888888888889 1)" fill="#1a1a1a" text-anchor="middle" style="font-family:'Liberation Mono',monospace;font-size:9.0px;font-weight:normal;white-space:pre;stroke:#1a1a1a;stroke-width:0.24px;paint-order:normal;">0</text></svg>
<svg class="ab" style="left:0;top:0;overflow:visible" width="1" height="1"><text transform="translate(359.00 45.70) scale(0.838888888888889 1)" fill="#1a1a1a" text-anchor="middle" style="font-family:'Liberation Mono',monospace;font-size:9.0px;font-weight:normal;white-space:pre;stroke:#1a1a1a;stroke-width:0.24px;paint-order:normal;">12 03 4D 00 53 00 46 00 ...</text></svg>
<div class="ab" style="left:13px;top:73.80000000000001px;width:430px;height:2px;background:#fafafa;"></div>
<svg class="ab" style="left:4px;top:59.30000000000001px" width="5" height="8"><path d="M1 1l3 3-3 3" fill="none" stroke="#a4a4a4" stroke-width="0.9"/></svg>
<div class="ab" style="left:13px;top:52.80000000000001px;width:115px;height:21px;background:#fff;border:1px solid #4a4a4a"></div>
<div class="ab" style="left:14px;top:53.30000000000001px;width:102px;height:9.5px;background:#1e90ff;"></div>
<div class="ab" style="left:116px;top:53.30000000000001px;width:11px;height:9.5px;background:#006400;"></div>
<div class="ab" style="left:116px;top:62.80000000000001px;width:1px;height:10px;background:#9a9a9a;"></div>
<svg class="ab" style="left:0;top:0;overflow:visible" width="1" height="1"><text transform="translate(65.00 60.60) scale(0.838888888888889 1)" fill="#e6f3ff" text-anchor="middle" style="font-family:'Liberation Mono',monospace;font-size:9.0px;font-weight:normal;white-space:pre;">Control In</text></svg>
<svg class="ab" style="left:0;top:0;overflow:visible" width="1" height="1"><text transform="translate(121.50 60.60) scale(0.838888888888889 1)" fill="#d8ecd8" text-anchor="middle" style="font-family:'Liberation Mono',monospace;font-size:9.0px;font-weight:normal;white-space:pre;">S</text></svg>
<svg class="ab" style="left:0;top:0;overflow:visible" width="1" height="1"><text transform="translate(65.00 70.60) scale(0.838888888888889 1)" fill="#1a1a1a" text-anchor="middle" style="font-family:'Liberation Mono',monospace;font-size:9.0px;font-weight:normal;white-space:pre;stroke:#1a1a1a;stroke-width:0.24px;paint-order:normal;">244.656250 ms</text></svg>
<svg class="ab" style="left:0;top:0;overflow:visible" width="1" height="1"><text transform="translate(122.00 70.60) scale(0.838888888888889 1)" fill="#1a1a1a" text-anchor="middle" style="font-family:'Liberation Mono',monospace;font-size:9.0px;font-weight:normal;white-space:pre;stroke:#1a1a1a;stroke-width:0.24px;paint-order:normal;">F</text></svg>
<div class="ab" style="left:138px;top:52.80000000000001px;width:310px;height:21px;background:#fff;border:1px solid #4a4a4a"></div>
<div class="ab" style="left:139px;top:53.30000000000001px;width:67px;height:9.5px;background:#bdbd78;"></div>
<div class="ab" style="left:207px;top:53.30000000000001px;width:33px;height:9.5px;background:#808080;"></div>
<div class="ab" style="left:241px;top:53.30000000000001px;width:33px;height:9.5px;background:#c0c0c0;"></div>
<div class="ab" style="left:275px;top:53.30000000000001px;width:170px;height:9.5px;background:#8b0000;"></div>
<div class="ab" style="left:206px;top:52.80000000000001px;width:1px;height:21px;background:#4a4a4a;"></div>
<div class="ab" style="left:240px;top:52.80000000000001px;width:1px;height:21px;background:#4a4a4a;"></div>
<div class="ab" style="left:274px;top:52.80000000000001px;width:1px;height:21px;background:#4a4a4a;"></div>
<svg class="ab" style="left:0;top:0;overflow:visible" width="1" height="1"><text transform="translate(172.50 60.60) scale(0.838888888888889 1)" fill="#2a2a2a" text-anchor="middle" style="font-family:'Liberation Mono',monospace;font-size:9.0px;font-weight:normal;white-space:pre;stroke:#2a2a2a;stroke-width:0.2px;paint-order:normal;">Request</text></svg>
<svg class="ab" style="left:0;top:0;overflow:visible" width="1" height="1"><text transform="translate(223.50 60.60) scale(0.838888888888889 1)" fill="#d6d6d6" text-anchor="middle" style="font-family:'Liberation Mono',monospace;font-size:9.0px;font-weight:normal;white-space:pre;">ADDR</text></svg>
<svg class="ab" style="left:0;top:0;overflow:visible" width="1" height="1"><text transform="translate(257.50 60.60) scale(0.838888888888889 1)" fill="#333" text-anchor="middle" style="font-family:'Liberation Mono',monospace;font-size:9.0px;font-weight:normal;white-space:pre;stroke:#333;stroke-width:0.2px;paint-order:normal;">ENDP</text></svg>
<svg class="ab" style="left:0;top:0;overflow:visible" width="1" height="1"><text transform="translate(359.00 60.60) scale(0.838888888888889 1)" fill="#f2dede" text-anchor="middle" style="font-family:'Liberation Mono',monospace;font-size:9.0px;font-weight:normal;white-space:pre;">DATA ( 22bytes)</text></svg>
<svg class="ab" style="left:0;top:0;overflow:visible" width="1" height="1"><text transform="translate(204.30 70.60) scale(0.838888888888889 1)" fill="#1a1a1a" text-anchor="end" style="font-family:'Liberation Mono',monospace;font-size:9.0px;font-weight:normal;white-space:pre;stroke:#1a1a1a;stroke-width:0.24px;paint-order:normal;">Get Descriptor</text></svg>
<svg class="ab" style="left:0;top:0;overflow:visible" width="1" height="1"><text transform="translate(223.50 70.60) scale(0.838888888888889 1)" fill="#1a1a1a" text-anchor="middle" style="font-family:'Liberation Mono',monospace;font-size:9.0px;font-weight:normal;white-space:pre;stroke:#1a1a1a;stroke-width:0.24px;paint-order:normal;">35</text></svg>
<svg class="ab" style="left:0;top:0;overflow:visible" width="1" height="1"><text transform="translate(257.50 70.60) scale(0.838888888888889 1)" fill="#1a1a1a" text-anchor="middle" style="font-family:'Liberation Mono',monospace;font-size:9.0px;font-weight:normal;white-space:pre;stroke:#1a1a1a;stroke-width:0.24px;paint-order:normal;">0</text></svg>
<svg class="ab" style="left:0;top:0;overflow:visible" width="1" height="1"><text transform="translate(359.00 70.60) scale(0.838888888888889 1)" fill="#1a1a1a" text-anchor="middle" style="font-family:'Liberation Mono',monospace;font-size:9.0px;font-weight:normal;white-space:pre;stroke:#1a1a1a;stroke-width:0.24px;paint-order:normal;">16 03 54 00 55 00 53 00 ...</text></svg>
<div class="ab" style="left:13px;top:98.69999999999999px;width:430px;height:2px;background:#fafafa;"></div>
<svg class="ab" style="left:4px;top:84.19999999999999px" width="5" height="8"><path d="M1 1l3 3-3 3" fill="none" stroke="#a4a4a4" stroke-width="0.9"/></svg>
<div class="ab" style="left:13px;top:77.69999999999999px;width:115px;height:21px;background:#fff;border:1px solid #4a4a4a"></div>
<div class="ab" style="left:14px;top:78.19999999999999px;width:102px;height:9.5px;background:#1e90ff;"></div>
<div class="ab" style="left:116px;top:78.19999999999999px;width:11px;height:9.5px;background:#006400;"></div>
<div class="ab" style="left:116px;top:87.69999999999999px;width:1px;height:10px;background:#9a9a9a;"></div>
<svg class="ab" style="left:0;top:0;overflow:visible" width="1" height="1"><text transform="translate(65.00 85.50) scale(0.838888888888889 1)" fill="#e6f3ff" text-anchor="middle" style="font-family:'Liberation Mono',monospace;font-size:9.0px;font-weight:normal;white-space:pre;">Control In</text></svg>
<svg class="ab" style="left:0;top:0;overflow:visible" width="1" height="1"><text transform="translate(121.50 85.50) scale(0.838888888888889 1)" fill="#d8ecd8" text-anchor="middle" style="font-family:'Liberation Mono',monospace;font-size:9.0px;font-weight:normal;white-space:pre;">S</text></svg>
<svg class="ab" style="left:0;top:0;overflow:visible" width="1" height="1"><text transform="translate(65.00 95.50) scale(0.838888888888889 1)" fill="#1a1a1a" text-anchor="middle" style="font-family:'Liberation Mono',monospace;font-size:9.0px;font-weight:normal;white-space:pre;stroke:#1a1a1a;stroke-width:0.24px;paint-order:normal;">253.502333 ms</text></svg>
<svg class="ab" style="left:0;top:0;overflow:visible" width="1" height="1"><text transform="translate(122.00 95.50) scale(0.838888888888889 1)" fill="#1a1a1a" text-anchor="middle" style="font-family:'Liberation Mono',monospace;font-size:9.0px;font-weight:normal;white-space:pre;stroke:#1a1a1a;stroke-width:0.24px;paint-order:normal;">F</text></svg>
<div class="ab" style="left:138px;top:77.69999999999999px;width:310px;height:21px;background:#fff;border:1px solid #4a4a4a"></div>
<div class="ab" style="left:139px;top:78.19999999999999px;width:67px;height:9.5px;background:#bdbd78;"></div>
<div class="ab" style="left:207px;top:78.19999999999999px;width:33px;height:9.5px;background:#808080;"></div>
<div class="ab" style="left:241px;top:78.19999999999999px;width:33px;height:9.5px;background:#c0c0c0;"></div>
<div class="ab" style="left:275px;top:78.19999999999999px;width:170px;height:9.5px;background:#8b0000;"></div>
<div class="ab" style="left:206px;top:77.69999999999999px;width:1px;height:21px;background:#4a4a4a;"></div>
<div class="ab" style="left:240px;top:77.69999999999999px;width:1px;height:21px;background:#4a4a4a;"></div>
<div class="ab" style="left:274px;top:77.69999999999999px;width:1px;height:21px;background:#4a4a4a;"></div>
<svg class="ab" style="left:0;top:0;overflow:visible" width="1" height="1"><text transform="translate(172.50 85.50) scale(0.838888888888889 1)" fill="#2a2a2a" text-anchor="middle" style="font-family:'Liberation Mono',monospace;font-size:9.0px;font-weight:normal;white-space:pre;stroke:#2a2a2a;stroke-width:0.2px;paint-order:normal;">Request</text></svg>
<svg class="ab" style="left:0;top:0;overflow:visible" width="1" height="1"><text transform="translate(223.50 85.50) scale(0.838888888888889 1)" fill="#d6d6d6" text-anchor="middle" style="font-family:'Liberation Mono',monospace;font-size:9.0px;font-weight:normal;white-space:pre;">ADDR</text></svg>
<svg class="ab" style="left:0;top:0;overflow:visible" width="1" height="1"><text transform="translate(257.50 85.50) scale(0.838888888888889 1)" fill="#333" text-anchor="middle" style="font-family:'Liberation Mono',monospace;font-size:9.0px;font-weight:normal;white-space:pre;stroke:#333;stroke-width:0.2px;paint-order:normal;">ENDP</text></svg>
<svg class="ab" style="left:0;top:0;overflow:visible" width="1" height="1"><text transform="translate(359.00 85.50) scale(0.838888888888889 1)" fill="#f2dede" text-anchor="middle" style="font-family:'Liberation Mono',monospace;font-size:9.0px;font-weight:normal;white-space:pre;">DATA ( 16bytes)</text></svg>
<svg class="ab" style="left:0;top:0;overflow:visible" width="1" height="1"><text transform="translate(204.30 95.50) scale(0.838888888888889 1)" fill="#1a1a1a" text-anchor="end" style="font-family:'Liberation Mono',monospace;font-size:9.0px;font-weight:normal;white-space:pre;stroke:#1a1a1a;stroke-width:0.24px;paint-order:normal;">Vendor req 23</text></svg>
<svg class="ab" style="left:0;top:0;overflow:visible" width="1" height="1"><text transform="translate(223.50 95.50) scale(0.838888888888889 1)" fill="#1a1a1a" text-anchor="middle" style="font-family:'Liberation Mono',monospace;font-size:9.0px;font-weight:normal;white-space:pre;stroke:#1a1a1a;stroke-width:0.24px;paint-order:normal;">35</text></svg>
<svg class="ab" style="left:0;top:0;overflow:visible" width="1" height="1"><text transform="translate(257.50 95.50) scale(0.838888888888889 1)" fill="#1a1a1a" text-anchor="middle" style="font-family:'Liberation Mono',monospace;font-size:9.0px;font-weight:normal;white-space:pre;stroke:#1a1a1a;stroke-width:0.24px;paint-order:normal;">0</text></svg>
<svg class="ab" style="left:0;top:0;overflow:visible" width="1" height="1"><text transform="translate(359.00 95.50) scale(0.838888888888889 1)" fill="#1a1a1a" text-anchor="middle" style="font-family:'Liberation Mono',monospace;font-size:9.0px;font-weight:normal;white-space:pre;stroke:#1a1a1a;stroke-width:0.24px;paint-order:normal;">28 00 00 00 00 01 04 00 ...</text></svg>
<div class="ab" style="left:13px;top:123.6px;width:430px;height:2px;background:#fafafa;"></div>
<svg class="ab" style="left:4px;top:109.1px" width="5" height="8"><path d="M1 1l3 3-3 3" fill="none" stroke="#a4a4a4" stroke-width="0.9"/></svg>
<div class="ab" style="left:13px;top:102.6px;width:115px;height:21px;background:#fff;border:1px solid #4a4a4a"></div>
<div class="ab" style="left:14px;top:103.1px;width:102px;height:9.5px;background:#1e90ff;"></div>
<div class="ab" style="left:116px;top:103.1px;width:11px;height:9.5px;background:#006400;"></div>
<div class="ab" style="left:116px;top:112.6px;width:1px;height:10px;background:#9a9a9a;"></div>
<svg class="ab" style="left:0;top:0;overflow:visible" width="1" height="1"><text transform="translate(65.00 110.40) scale(0.838888888888889 1)" fill="#e6f3ff" text-anchor="middle" style="font-family:'Liberation Mono',monospace;font-size:9.0px;font-weight:normal;white-space:pre;">Control In</text></svg>
<svg class="ab" style="left:0;top:0;overflow:visible" width="1" height="1"><text transform="translate(121.50 110.40) scale(0.838888888888889 1)" fill="#d8ecd8" text-anchor="middle" style="font-family:'Liberation Mono',monospace;font-size:9.0px;font-weight:normal;white-space:pre;">S</text></svg>
<svg class="ab" style="left:0;top:0;overflow:visible" width="1" height="1"><text transform="translate(65.00 120.40) scale(0.838888888888889 1)" fill="#1a1a1a" text-anchor="middle" style="font-family:'Liberation Mono',monospace;font-size:9.0px;font-weight:normal;white-space:pre;stroke:#1a1a1a;stroke-width:0.24px;paint-order:normal;">262.388500 ms</text></svg>
<svg class="ab" style="left:0;top:0;overflow:visible" width="1" height="1"><text transform="translate(122.00 120.40) scale(0.838888888888889 1)" fill="#1a1a1a" text-anchor="middle" style="font-family:'Liberation Mono',monospace;font-size:9.0px;font-weight:normal;white-space:pre;stroke:#1a1a1a;stroke-width:0.24px;paint-order:normal;">F</text></svg>
<div class="ab" style="left:138px;top:102.6px;width:310px;height:21px;background:#fff;border:1px solid #4a4a4a"></div>
<div class="ab" style="left:139px;top:103.1px;width:67px;height:9.5px;background:#bdbd78;"></div>
<div class="ab" style="left:207px;top:103.1px;width:33px;height:9.5px;background:#808080;"></div>
<div class="ab" style="left:241px;top:103.1px;width:33px;height:9.5px;background:#c0c0c0;"></div>
<div class="ab" style="left:275px;top:103.1px;width:170px;height:9.5px;background:#8b0000;"></div>
<div class="ab" style="left:206px;top:102.6px;width:1px;height:21px;background:#4a4a4a;"></div>
<div class="ab" style="left:240px;top:102.6px;width:1px;height:21px;background:#4a4a4a;"></div>
<div class="ab" style="left:274px;top:102.6px;width:1px;height:21px;background:#4a4a4a;"></div>
<svg class="ab" style="left:0;top:0;overflow:visible" width="1" height="1"><text transform="translate(172.50 110.40) scale(0.838888888888889 1)" fill="#2a2a2a" text-anchor="middle" style="font-family:'Liberation Mono',monospace;font-size:9.0px;font-weight:normal;white-space:pre;stroke:#2a2a2a;stroke-width:0.2px;paint-order:normal;">Request</text></svg>
<svg class="ab" style="left:0;top:0;overflow:visible" width="1" height="1"><text transform="translate(223.50 110.40) scale(0.838888888888889 1)" fill="#d6d6d6" text-anchor="middle" style="font-family:'Liberation Mono',monospace;font-size:9.0px;font-weight:normal;white-space:pre;">ADDR</text></svg>
<svg class="ab" style="left:0;top:0;overflow:visible" width="1" height="1"><text transform="translate(257.50 110.40) scale(0.838888888888889 1)" fill="#333" text-anchor="middle" style="font-family:'Liberation Mono',monospace;font-size:9.0px;font-weight:normal;white-space:pre;stroke:#333;stroke-width:0.2px;paint-order:normal;">ENDP</text></svg>
<svg class="ab" style="left:0;top:0;overflow:visible" width="1" height="1"><text transform="translate(359.00 110.40) scale(0.838888888888889 1)" fill="#f2dede" text-anchor="middle" style="font-family:'Liberation Mono',monospace;font-size:9.0px;font-weight:normal;white-space:pre;">DATA ( 40bytes)</text></svg>
<svg class="ab" style="left:0;top:0;overflow:visible" width="1" height="1"><text transform="translate(204.30 120.40) scale(0.838888888888889 1)" fill="#1a1a1a" text-anchor="end" style="font-family:'Liberation Mono',monospace;font-size:9.0px;font-weight:normal;white-space:pre;stroke:#1a1a1a;stroke-width:0.24px;paint-order:normal;">Vendor req 23</text></svg>
<svg class="ab" style="left:0;top:0;overflow:visible" width="1" height="1"><text transform="translate(223.50 120.40) scale(0.838888888888889 1)" fill="#1a1a1a" text-anchor="middle" style="font-family:'Liberation Mono',monospace;font-size:9.0px;font-weight:normal;white-space:pre;stroke:#1a1a1a;stroke-width:0.24px;paint-order:normal;">35</text></svg>
<svg class="ab" style="left:0;top:0;overflow:visible" width="1" height="1"><text transform="translate(257.50 120.40) scale(0.838888888888889 1)" fill="#1a1a1a" text-anchor="middle" style="font-family:'Liberation Mono',monospace;font-size:9.0px;font-weight:normal;white-space:pre;stroke:#1a1a1a;stroke-width:0.24px;paint-order:normal;">0</text></svg>
<svg class="ab" style="left:0;top:0;overflow:visible" width="1" height="1"><text transform="translate(359.00 120.40) scale(0.838888888888889 1)" fill="#1a1a1a" text-anchor="middle" style="font-family:'Liberation Mono',monospace;font-size:9.0px;font-weight:normal;white-space:pre;stroke:#1a1a1a;stroke-width:0.24px;paint-order:normal;">28 00 00 00 00 01 04 00 ...</text></svg>
<div class="ab" style="left:13px;top:99.6px;width:430px;height:24px;background:rgba(100,100,100,0.4);"></div>
<div class="ab" style="left:13px;top:148.5px;width:430px;height:2px;background:#fafafa;"></div>
<svg class="ab" style="left:4px;top:134.0px" width="5" height="8"><path d="M1 1l3 3-3 3" fill="none" stroke="#a4a4a4" stroke-width="0.9"/></svg>
<div class="ab" style="left:13px;top:127.5px;width:115px;height:21px;background:#fff;border:1px solid #4a4a4a"></div>
<div class="ab" style="left:14px;top:128.0px;width:102px;height:9.5px;background:#1e90ff;"></div>
<div class="ab" style="left:116px;top:128.0px;width:11px;height:9.5px;background:#006400;"></div>
<div class="ab" style="left:116px;top:137.5px;width:1px;height:10px;background:#9a9a9a;"></div>
<svg class="ab" style="left:0;top:0;overflow:visible" width="1" height="1"><text transform="translate(65.00 135.30) scale(0.838888888888889 1)" fill="#e6f3ff" text-anchor="middle" style="font-family:'Liberation Mono',monospace;font-size:9.0px;font-weight:normal;white-space:pre;">Control In</text></svg>
<svg class="ab" style="left:0;top:0;overflow:visible" width="1" height="1"><text transform="translate(121.50 135.30) scale(0.838888888888889 1)" fill="#d8ecd8" text-anchor="middle" style="font-family:'Liberation Mono',monospace;font-size:9.0px;font-weight:normal;white-space:pre;">S</text></svg>
<svg class="ab" style="left:0;top:0;overflow:visible" width="1" height="1"><text transform="translate(65.00 145.30) scale(0.838888888888889 1)" fill="#1a1a1a" text-anchor="middle" style="font-family:'Liberation Mono',monospace;font-size:9.0px;font-weight:normal;white-space:pre;stroke:#1a1a1a;stroke-width:0.24px;paint-order:normal;">271.693750 ms</text></svg>
<svg class="ab" style="left:0;top:0;overflow:visible" width="1" height="1"><text transform="translate(122.00 145.30) scale(0.838888888888889 1)" fill="#1a1a1a" text-anchor="middle" style="font-family:'Liberation Mono',monospace;font-size:9.0px;font-weight:normal;white-space:pre;stroke:#1a1a1a;stroke-width:0.24px;paint-order:normal;">F</text></svg>
<div class="ab" style="left:138px;top:127.5px;width:310px;height:21px;background:#fff;border:1px solid #4a4a4a"></div>
<div class="ab" style="left:139px;top:128.0px;width:67px;height:9.5px;background:#bdbd78;"></div>
<div class="ab" style="left:207px;top:128.0px;width:33px;height:9.5px;background:#808080;"></div>
<div class="ab" style="left:241px;top:128.0px;width:33px;height:9.5px;background:#c0c0c0;"></div>
<div class="ab" style="left:275px;top:128.0px;width:170px;height:9.5px;background:#8b0000;"></div>
<div class="ab" style="left:206px;top:127.5px;width:1px;height:21px;background:#4a4a4a;"></div>
<div class="ab" style="left:240px;top:127.5px;width:1px;height:21px;background:#4a4a4a;"></div>
<div class="ab" style="left:274px;top:127.5px;width:1px;height:21px;background:#4a4a4a;"></div>
<svg class="ab" style="left:0;top:0;overflow:visible" width="1" height="1"><text transform="translate(172.50 135.30) scale(0.838888888888889 1)" fill="#2a2a2a" text-anchor="middle" style="font-family:'Liberation Mono',monospace;font-size:9.0px;font-weight:normal;white-space:pre;stroke:#2a2a2a;stroke-width:0.2px;paint-order:normal;">Request</text></svg>
<svg class="ab" style="left:0;top:0;overflow:visible" width="1" height="1"><text transform="translate(223.50 135.30) scale(0.838888888888889 1)" fill="#d6d6d6" text-anchor="middle" style="font-family:'Liberation Mono',monospace;font-size:9.0px;font-weight:normal;white-space:pre;">ADDR</text></svg>
<svg class="ab" style="left:0;top:0;overflow:visible" width="1" height="1"><text transform="translate(257.50 135.30) scale(0.838888888888889 1)" fill="#333" text-anchor="middle" style="font-family:'Liberation Mono',monospace;font-size:9.0px;font-weight:normal;white-space:pre;stroke:#333;stroke-width:0.2px;paint-order:normal;">ENDP</text></svg>
<svg class="ab" style="left:0;top:0;overflow:visible" width="1" height="1"><text transform="translate(359.00 135.30) scale(0.838888888888889 1)" fill="#f2dede" text-anchor="middle" style="font-family:'Liberation Mono',monospace;font-size:9.0px;font-weight:normal;white-space:pre;">DATA ( 4bytes)</text></svg>
<svg class="ab" style="left:0;top:0;overflow:visible" width="1" height="1"><text transform="translate(204.30 145.30) scale(0.838888888888889 1)" fill="#1a1a1a" text-anchor="end" style="font-family:'Liberation Mono',monospace;font-size:9.0px;font-weight:normal;white-space:pre;stroke:#1a1a1a;stroke-width:0.24px;paint-order:normal;">Get Descriptor</text></svg>
<svg class="ab" style="left:0;top:0;overflow:visible" width="1" height="1"><text transform="translate(223.50 145.30) scale(0.838888888888889 1)" fill="#1a1a1a" text-anchor="middle" style="font-family:'Liberation Mono',monospace;font-size:9.0px;font-weight:normal;white-space:pre;stroke:#1a1a1a;stroke-width:0.24px;paint-order:normal;">35</text></svg>
<svg class="ab" style="left:0;top:0;overflow:visible" width="1" height="1"><text transform="translate(257.50 145.30) scale(0.838888888888889 1)" fill="#1a1a1a" text-anchor="middle" style="font-family:'Liberation Mono',monospace;font-size:9.0px;font-weight:normal;white-space:pre;stroke:#1a1a1a;stroke-width:0.24px;paint-order:normal;">0</text></svg>
<svg class="ab" style="left:0;top:0;overflow:visible" width="1" height="1"><text transform="translate(359.00 145.30) scale(0.838888888888889 1)" fill="#1a1a1a" text-anchor="middle" style="font-family:'Liberation Mono',monospace;font-size:9.0px;font-weight:normal;white-space:pre;stroke:#1a1a1a;stroke-width:0.24px;paint-order:normal;">04 03 09 04</text></svg>
<div class="ab" style="left:13px;top:173.39999999999998px;width:430px;height:2px;background:#fafafa;"></div>
<svg class="ab" style="left:4px;top:158.89999999999998px" width="5" height="8"><path d="M1 1l3 3-3 3" fill="none" stroke="#a4a4a4" stroke-width="0.9"/></svg>
<div class="ab" style="left:13px;top:152.39999999999998px;width:115px;height:21px;background:#fff;border:1px solid #4a4a4a"></div>
<div class="ab" style="left:14px;top:152.89999999999998px;width:102px;height:9.5px;background:#1e90ff;"></div>
<div class="ab" style="left:116px;top:152.89999999999998px;width:11px;height:9.5px;background:#006400;"></div>
<div class="ab" style="left:116px;top:162.39999999999998px;width:1px;height:10px;background:#9a9a9a;"></div>
<svg class="ab" style="left:0;top:0;overflow:visible" width="1" height="1"><text transform="translate(65.00 160.20) scale(0.838888888888889 1)" fill="#e6f3ff" text-anchor="middle" style="font-family:'Liberation Mono',monospace;font-size:9.0px;font-weight:normal;white-space:pre;">Control In</text></svg>
<svg class="ab" style="left:0;top:0;overflow:visible" width="1" height="1"><text transform="translate(121.50 160.20) scale(0.838888888888889 1)" fill="#d8ecd8" text-anchor="middle" style="font-family:'Liberation Mono',monospace;font-size:9.0px;font-weight:normal;white-space:pre;">S</text></svg>
<svg class="ab" style="left:0;top:0;overflow:visible" width="1" height="1"><text transform="translate(65.00 170.20) scale(0.838888888888889 1)" fill="#1a1a1a" text-anchor="middle" style="font-family:'Liberation Mono',monospace;font-size:9.0px;font-weight:normal;white-space:pre;stroke:#1a1a1a;stroke-width:0.24px;paint-order:normal;">281.194250 ms</text></svg>
<svg class="ab" style="left:0;top:0;overflow:visible" width="1" height="1"><text transform="translate(122.00 170.20) scale(0.838888888888889 1)" fill="#1a1a1a" text-anchor="middle" style="font-family:'Liberation Mono',monospace;font-size:9.0px;font-weight:normal;white-space:pre;stroke:#1a1a1a;stroke-width:0.24px;paint-order:normal;">F</text></svg>
<div class="ab" style="left:138px;top:152.39999999999998px;width:310px;height:21px;background:#fff;border:1px solid #4a4a4a"></div>
<div class="ab" style="left:139px;top:152.89999999999998px;width:67px;height:9.5px;background:#bdbd78;"></div>
<div class="ab" style="left:207px;top:152.89999999999998px;width:33px;height:9.5px;background:#808080;"></div>
<div class="ab" style="left:241px;top:152.89999999999998px;width:33px;height:9.5px;background:#c0c0c0;"></div>
<div class="ab" style="left:275px;top:152.89999999999998px;width:170px;height:9.5px;background:#8b0000;"></div>
<div class="ab" style="left:206px;top:152.39999999999998px;width:1px;height:21px;background:#4a4a4a;"></div>
<div class="ab" style="left:240px;top:152.39999999999998px;width:1px;height:21px;background:#4a4a4a;"></div>
<div class="ab" style="left:274px;top:152.39999999999998px;width:1px;height:21px;background:#4a4a4a;"></div>
<svg class="ab" style="left:0;top:0;overflow:visible" width="1" height="1"><text transform="translate(172.50 160.20) scale(0.838888888888889 1)" fill="#2a2a2a" text-anchor="middle" style="font-family:'Liberation Mono',monospace;font-size:9.0px;font-weight:normal;white-space:pre;stroke:#2a2a2a;stroke-width:0.2px;paint-order:normal;">Request</text></svg>
<svg class="ab" style="left:0;top:0;overflow:visible" width="1" height="1"><text transform="translate(223.50 160.20) scale(0.838888888888889 1)" fill="#d6d6d6" text-anchor="middle" style="font-family:'Liberation Mono',monospace;font-size:9.0px;font-weight:normal;white-space:pre;">ADDR</text></svg>
<svg class="ab" style="left:0;top:0;overflow:visible" width="1" height="1"><text transform="translate(257.50 160.20) scale(0.838888888888889 1)" fill="#333" text-anchor="middle" style="font-family:'Liberation Mono',monospace;font-size:9.0px;font-weight:normal;white-space:pre;stroke:#333;stroke-width:0.2px;paint-order:normal;">ENDP</text></svg>
<svg class="ab" style="left:0;top:0;overflow:visible" width="1" height="1"><text transform="translate(359.00 160.20) scale(0.838888888888889 1)" fill="#f2dede" text-anchor="middle" style="font-family:'Liberation Mono',monospace;font-size:9.0px;font-weight:normal;white-space:pre;">DATA ( 42bytes)</text></svg>
<svg class="ab" style="left:0;top:0;overflow:visible" width="1" height="1"><text transform="translate(204.30 170.20) scale(0.838888888888889 1)" fill="#1a1a1a" text-anchor="end" style="font-family:'Liberation Mono',monospace;font-size:9.0px;font-weight:normal;white-space:pre;stroke:#1a1a1a;stroke-width:0.24px;paint-order:normal;">Get Descriptor</text></svg>
<svg class="ab" style="left:0;top:0;overflow:visible" width="1" height="1"><text transform="translate(223.50 170.20) scale(0.838888888888889 1)" fill="#1a1a1a" text-anchor="middle" style="font-family:'Liberation Mono',monospace;font-size:9.0px;font-weight:normal;white-space:pre;stroke:#1a1a1a;stroke-width:0.24px;paint-order:normal;">35</text></svg>
<svg class="ab" style="left:0;top:0;overflow:visible" width="1" height="1"><text transform="translate(257.50 170.20) scale(0.838888888888889 1)" fill="#1a1a1a" text-anchor="middle" style="font-family:'Liberation Mono',monospace;font-size:9.0px;font-weight:normal;white-space:pre;stroke:#1a1a1a;stroke-width:0.24px;paint-order:normal;">0</text></svg>
<svg class="ab" style="left:0;top:0;overflow:visible" width="1" height="1"><text transform="translate(359.00 170.20) scale(0.838888888888889 1)" fill="#1a1a1a" text-anchor="middle" style="font-family:'Liberation Mono',monospace;font-size:9.0px;font-weight:normal;white-space:pre;stroke:#1a1a1a;stroke-width:0.24px;paint-order:normal;">2A 03 54 00 65 00 65 00 ...</text></svg>
<div class="ab" style="left:13px;top:198.29999999999995px;width:430px;height:2px;background:#fafafa;"></div>
<svg class="ab" style="left:4px;top:183.79999999999995px" width="5" height="8"><path d="M1 1l3 3-3 3" fill="none" stroke="#a4a4a4" stroke-width="0.9"/></svg>
<div class="ab" style="left:13px;top:177.29999999999995px;width:115px;height:21px;background:#fff;border:1px solid #4a4a4a"></div>
<div class="ab" style="left:14px;top:177.79999999999995px;width:102px;height:9.5px;background:#1e90ff;"></div>
<div class="ab" style="left:116px;top:177.79999999999995px;width:11px;height:9.5px;background:#006400;"></div>
<div class="ab" style="left:116px;top:187.29999999999995px;width:1px;height:10px;background:#9a9a9a;"></div>
<svg class="ab" style="left:0;top:0;overflow:visible" width="1" height="1"><text transform="translate(65.00 185.10) scale(0.838888888888889 1)" fill="#e6f3ff" text-anchor="middle" style="font-family:'Liberation Mono',monospace;font-size:9.0px;font-weight:normal;white-space:pre;">Control In</text></svg>
<svg class="ab" style="left:0;top:0;overflow:visible" width="1" height="1"><text transform="translate(121.50 185.10) scale(0.838888888888889 1)" fill="#d8ecd8" text-anchor="middle" style="font-family:'Liberation Mono',monospace;font-size:9.0px;font-weight:normal;white-space:pre;">S</text></svg>
<svg class="ab" style="left:0;top:0;overflow:visible" width="1" height="1"><text transform="translate(65.00 195.10) scale(0.838888888888889 1)" fill="#1a1a1a" text-anchor="middle" style="font-family:'Liberation Mono',monospace;font-size:9.0px;font-weight:normal;white-space:pre;stroke:#1a1a1a;stroke-width:0.24px;paint-order:normal;">291.100416 ms</text></svg>
<svg class="ab" style="left:0;top:0;overflow:visible" width="1" height="1"><text transform="translate(122.00 195.10) scale(0.838888888888889 1)" fill="#1a1a1a" text-anchor="middle" style="font-family:'Liberation Mono',monospace;font-size:9.0px;font-weight:normal;white-space:pre;stroke:#1a1a1a;stroke-width:0.24px;paint-order:normal;">F</text></svg>
<div class="ab" style="left:138px;top:177.29999999999995px;width:310px;height:21px;background:#fff;border:1px solid #4a4a4a"></div>
<div class="ab" style="left:139px;top:177.79999999999995px;width:67px;height:9.5px;background:#bdbd78;"></div>
<div class="ab" style="left:207px;top:177.79999999999995px;width:33px;height:9.5px;background:#808080;"></div>
<div class="ab" style="left:241px;top:177.79999999999995px;width:33px;height:9.5px;background:#c0c0c0;"></div>
<div class="ab" style="left:275px;top:177.79999999999995px;width:170px;height:9.5px;background:#8b0000;"></div>
<div class="ab" style="left:206px;top:177.29999999999995px;width:1px;height:21px;background:#4a4a4a;"></div>
<div class="ab" style="left:240px;top:177.29999999999995px;width:1px;height:21px;background:#4a4a4a;"></div>
<div class="ab" style="left:274px;top:177.29999999999995px;width:1px;height:21px;background:#4a4a4a;"></div>
<svg class="ab" style="left:0;top:0;overflow:visible" width="1" height="1"><text transform="translate(172.50 185.10) scale(0.838888888888889 1)" fill="#2a2a2a" text-anchor="middle" style="font-family:'Liberation Mono',monospace;font-size:9.0px;font-weight:normal;white-space:pre;stroke:#2a2a2a;stroke-width:0.2px;paint-order:normal;">Request</text></svg>
<svg class="ab" style="left:0;top:0;overflow:visible" width="1" height="1"><text transform="translate(223.50 185.10) scale(0.838888888888889 1)" fill="#d6d6d6" text-anchor="middle" style="font-family:'Liberation Mono',monospace;font-size:9.0px;font-weight:normal;white-space:pre;">ADDR</text></svg>
<svg class="ab" style="left:0;top:0;overflow:visible" width="1" height="1"><text transform="translate(257.50 185.10) scale(0.838888888888889 1)" fill="#333" text-anchor="middle" style="font-family:'Liberation Mono',monospace;font-size:9.0px;font-weight:normal;white-space:pre;stroke:#333;stroke-width:0.2px;paint-order:normal;">ENDP</text></svg>
<svg class="ab" style="left:0;top:0;overflow:visible" width="1" height="1"><text transform="translate(359.00 185.10) scale(0.838888888888889 1)" fill="#f2dede" text-anchor="middle" style="font-family:'Liberation Mono',monospace;font-size:9.0px;font-weight:normal;white-space:pre;">DATA ( 10bytes)</text></svg>
<svg class="ab" style="left:0;top:0;overflow:visible" width="1" height="1"><text transform="translate(204.30 195.10) scale(0.838888888888889 1)" fill="#1a1a1a" text-anchor="end" style="font-family:'Liberation Mono',monospace;font-size:9.0px;font-weight:normal;white-space:pre;stroke:#1a1a1a;stroke-width:0.24px;paint-order:normal;">Get Descriptor</text></svg>
<svg class="ab" style="left:0;top:0;overflow:visible" width="1" height="1"><text transform="translate(223.50 195.10) scale(0.838888888888889 1)" fill="#1a1a1a" text-anchor="middle" style="font-family:'Liberation Mono',monospace;font-size:9.0px;font-weight:normal;white-space:pre;stroke:#1a1a1a;stroke-width:0.24px;paint-order:normal;">35</text></svg>
<svg class="ab" style="left:0;top:0;overflow:visible" width="1" height="1"><text transform="translate(257.50 195.10) scale(0.838888888888889 1)" fill="#1a1a1a" text-anchor="middle" style="font-family:'Liberation Mono',monospace;font-size:9.0px;font-weight:normal;white-space:pre;stroke:#1a1a1a;stroke-width:0.24px;paint-order:normal;">0</text></svg>
<svg class="ab" style="left:0;top:0;overflow:visible" width="1" height="1"><text transform="translate(359.00 195.10) scale(0.838888888888889 1)" fill="#1a1a1a" text-anchor="middle" style="font-family:'Liberation Mono',monospace;font-size:9.0px;font-weight:normal;white-space:pre;stroke:#1a1a1a;stroke-width:0.24px;paint-order:normal;">0A 06 00 02 00 00 00 40 ...</text></svg>
<div class="ab" style="left:13px;top:223.2px;width:430px;height:2px;background:#fafafa;"></div>
<svg class="ab" style="left:4px;top:208.7px" width="5" height="8"><path d="M1 1l3 3-3 3" fill="none" stroke="#a4a4a4" stroke-width="0.9"/></svg>
<div class="ab" style="left:13px;top:202.2px;width:115px;height:21px;background:#fff;border:1px solid #4a4a4a"></div>
<div class="ab" style="left:14px;top:202.7px;width:102px;height:9.5px;background:#1e90ff;"></div>
<div class="ab" style="left:116px;top:202.7px;width:11px;height:9.5px;background:#006400;"></div>
<div class="ab" style="left:116px;top:212.2px;width:1px;height:10px;background:#9a9a9a;"></div>
<svg class="ab" style="left:0;top:0;overflow:visible" width="1" height="1"><text transform="translate(65.00 210.00) scale(0.838888888888889 1)" fill="#e6f3ff" text-anchor="middle" style="font-family:'Liberation Mono',monospace;font-size:9.0px;font-weight:normal;white-space:pre;">Control In</text></svg>
<svg class="ab" style="left:0;top:0;overflow:visible" width="1" height="1"><text transform="translate(121.50 210.00) scale(0.838888888888889 1)" fill="#d8ecd8" text-anchor="middle" style="font-family:'Liberation Mono',monospace;font-size:9.0px;font-weight:normal;white-space:pre;">S</text></svg>
<svg class="ab" style="left:0;top:0;overflow:visible" width="1" height="1"><text transform="translate(65.00 220.00) scale(0.838888888888889 1)" fill="#1a1a1a" text-anchor="middle" style="font-family:'Liberation Mono',monospace;font-size:9.0px;font-weight:normal;white-space:pre;stroke:#1a1a1a;stroke-width:0.24px;paint-order:normal;">373.232583 ms</text></svg>
<svg class="ab" style="left:0;top:0;overflow:visible" width="1" height="1"><text transform="translate(122.00 220.00) scale(0.838888888888889 1)" fill="#1a1a1a" text-anchor="middle" style="font-family:'Liberation Mono',monospace;font-size:9.0px;font-weight:normal;white-space:pre;stroke:#1a1a1a;stroke-width:0.24px;paint-order:normal;">F</text></svg>
<div class="ab" style="left:138px;top:202.2px;width:310px;height:21px;background:#fff;border:1px solid #4a4a4a"></div>
<div class="ab" style="left:139px;top:202.7px;width:67px;height:9.5px;background:#bdbd78;"></div>
<div class="ab" style="left:207px;top:202.7px;width:33px;height:9.5px;background:#808080;"></div>
<div class="ab" style="left:241px;top:202.7px;width:33px;height:9.5px;background:#c0c0c0;"></div>
<div class="ab" style="left:275px;top:202.7px;width:170px;height:9.5px;background:#8b0000;"></div>
<div class="ab" style="left:206px;top:202.2px;width:1px;height:21px;background:#4a4a4a;"></div>
<div class="ab" style="left:240px;top:202.2px;width:1px;height:21px;background:#4a4a4a;"></div>
<div class="ab" style="left:274px;top:202.2px;width:1px;height:21px;background:#4a4a4a;"></div>
<svg class="ab" style="left:0;top:0;overflow:visible" width="1" height="1"><text transform="translate(172.50 210.00) scale(0.838888888888889 1)" fill="#2a2a2a" text-anchor="middle" style="font-family:'Liberation Mono',monospace;font-size:9.0px;font-weight:normal;white-space:pre;stroke:#2a2a2a;stroke-width:0.2px;paint-order:normal;">Request</text></svg>
<svg class="ab" style="left:0;top:0;overflow:visible" width="1" height="1"><text transform="translate(223.50 210.00) scale(0.838888888888889 1)" fill="#d6d6d6" text-anchor="middle" style="font-family:'Liberation Mono',monospace;font-size:9.0px;font-weight:normal;white-space:pre;">ADDR</text></svg>
<svg class="ab" style="left:0;top:0;overflow:visible" width="1" height="1"><text transform="translate(257.50 210.00) scale(0.838888888888889 1)" fill="#333" text-anchor="middle" style="font-family:'Liberation Mono',monospace;font-size:9.0px;font-weight:normal;white-space:pre;stroke:#333;stroke-width:0.2px;paint-order:normal;">ENDP</text></svg>
<svg class="ab" style="left:0;top:0;overflow:visible" width="1" height="1"><text transform="translate(359.00 210.00) scale(0.838888888888889 1)" fill="#f2dede" text-anchor="middle" style="font-family:'Liberation Mono',monospace;font-size:9.0px;font-weight:normal;white-space:pre;">DATA ( 10bytes)</text></svg>
<svg class="ab" style="left:0;top:0;overflow:visible" width="1" height="1"><text transform="translate(204.30 220.00) scale(0.838888888888889 1)" fill="#1a1a1a" text-anchor="end" style="font-family:'Liberation Mono',monospace;font-size:9.0px;font-weight:normal;white-space:pre;stroke:#1a1a1a;stroke-width:0.24px;paint-order:normal;">Vendor req 23</text></svg>
<svg class="ab" style="left:0;top:0;overflow:visible" width="1" height="1"><text transform="translate(223.50 220.00) scale(0.838888888888889 1)" fill="#1a1a1a" text-anchor="middle" style="font-family:'Liberation Mono',monospace;font-size:9.0px;font-weight:normal;white-space:pre;stroke:#1a1a1a;stroke-width:0.24px;paint-order:normal;">35</text></svg>
<svg class="ab" style="left:0;top:0;overflow:visible" width="1" height="1"><text transform="translate(257.50 220.00) scale(0.838888888888889 1)" fill="#1a1a1a" text-anchor="middle" style="font-family:'Liberation Mono',monospace;font-size:9.0px;font-weight:normal;white-space:pre;stroke:#1a1a1a;stroke-width:0.24px;paint-order:normal;">0</text></svg>
<svg class="ab" style="left:0;top:0;overflow:visible" width="1" height="1"><text transform="translate(359.00 220.00) scale(0.838888888888889 1)" fill="#1a1a1a" text-anchor="middle" style="font-family:'Liberation Mono',monospace;font-size:9.0px;font-weight:normal;white-space:pre;stroke:#1a1a1a;stroke-width:0.24px;paint-order:normal;">8E 00 00 00 00 01 05 00 ...</text></svg>
<div class="ab" style="left:13px;top:248.10000000000002px;width:430px;height:2px;background:#fafafa;"></div>
<svg class="ab" style="left:4px;top:233.60000000000002px" width="5" height="8"><path d="M1 1l3 3-3 3" fill="none" stroke="#a4a4a4" stroke-width="0.9"/></svg>
<div class="ab" style="left:13px;top:227.10000000000002px;width:115px;height:21px;background:#fff;border:1px solid #4a4a4a"></div>
<div class="ab" style="left:14px;top:227.60000000000002px;width:102px;height:9.5px;background:#1e90ff;"></div>
<div class="ab" style="left:116px;top:227.60000000000002px;width:11px;height:9.5px;background:#006400;"></div>
<div class="ab" style="left:116px;top:237.10000000000002px;width:1px;height:10px;background:#9a9a9a;"></div>
<svg class="ab" style="left:0;top:0;overflow:visible" width="1" height="1"><text transform="translate(65.00 234.90) scale(0.838888888888889 1)" fill="#e6f3ff" text-anchor="middle" style="font-family:'Liberation Mono',monospace;font-size:9.0px;font-weight:normal;white-space:pre;">Control In</text></svg>
<svg class="ab" style="left:0;top:0;overflow:visible" width="1" height="1"><text transform="translate(121.50 234.90) scale(0.838888888888889 1)" fill="#d8ecd8" text-anchor="middle" style="font-family:'Liberation Mono',monospace;font-size:9.0px;font-weight:normal;white-space:pre;">S</text></svg>
<svg class="ab" style="left:0;top:0;overflow:visible" width="1" height="1"><text transform="translate(65.00 244.90) scale(0.838888888888889 1)" fill="#1a1a1a" text-anchor="middle" style="font-family:'Liberation Mono',monospace;font-size:9.0px;font-weight:normal;white-space:pre;stroke:#1a1a1a;stroke-width:0.24px;paint-order:normal;">382.529416 ms</text></svg>
<svg class="ab" style="left:0;top:0;overflow:visible" width="1" height="1"><text transform="translate(122.00 244.90) scale(0.838888888888889 1)" fill="#1a1a1a" text-anchor="middle" style="font-family:'Liberation Mono',monospace;font-size:9.0px;font-weight:normal;white-space:pre;stroke:#1a1a1a;stroke-width:0.24px;paint-order:normal;">F</text></svg>
<div class="ab" style="left:138px;top:227.10000000000002px;width:310px;height:21px;background:#fff;border:1px solid #4a4a4a"></div>
<div class="ab" style="left:139px;top:227.60000000000002px;width:67px;height:9.5px;background:#bdbd78;"></div>
<div class="ab" style="left:207px;top:227.60000000000002px;width:33px;height:9.5px;background:#808080;"></div>
<div class="ab" style="left:241px;top:227.60000000000002px;width:33px;height:9.5px;background:#c0c0c0;"></div>
<div class="ab" style="left:275px;top:227.60000000000002px;width:170px;height:9.5px;background:#8b0000;"></div>
<div class="ab" style="left:206px;top:227.10000000000002px;width:1px;height:21px;background:#4a4a4a;"></div>
<div class="ab" style="left:240px;top:227.10000000000002px;width:1px;height:21px;background:#4a4a4a;"></div>
<div class="ab" style="left:274px;top:227.10000000000002px;width:1px;height:21px;background:#4a4a4a;"></div>
<svg class="ab" style="left:0;top:0;overflow:visible" width="1" height="1"><text transform="translate(172.50 234.90) scale(0.838888888888889 1)" fill="#2a2a2a" text-anchor="middle" style="font-family:'Liberation Mono',monospace;font-size:9.0px;font-weight:normal;white-space:pre;stroke:#2a2a2a;stroke-width:0.2px;paint-order:normal;">Request</text></svg>
<svg class="ab" style="left:0;top:0;overflow:visible" width="1" height="1"><text transform="translate(223.50 234.90) scale(0.838888888888889 1)" fill="#d6d6d6" text-anchor="middle" style="font-family:'Liberation Mono',monospace;font-size:9.0px;font-weight:normal;white-space:pre;">ADDR</text></svg>
<svg class="ab" style="left:0;top:0;overflow:visible" width="1" height="1"><text transform="translate(257.50 234.90) scale(0.838888888888889 1)" fill="#333" text-anchor="middle" style="font-family:'Liberation Mono',monospace;font-size:9.0px;font-weight:normal;white-space:pre;stroke:#333;stroke-width:0.2px;paint-order:normal;">ENDP</text></svg>
<svg class="ab" style="left:0;top:0;overflow:visible" width="1" height="1"><text transform="translate(359.00 234.90) scale(0.838888888888889 1)" fill="#f2dede" text-anchor="middle" style="font-family:'Liberation Mono',monospace;font-size:9.0px;font-weight:normal;white-space:pre;">DATA ( 142bytes)</text></svg>
<svg class="ab" style="left:0;top:0;overflow:visible" width="1" height="1"><text transform="translate(204.30 244.90) scale(0.838888888888889 1)" fill="#1a1a1a" text-anchor="end" style="font-family:'Liberation Mono',monospace;font-size:9.0px;font-weight:normal;white-space:pre;stroke:#1a1a1a;stroke-width:0.24px;paint-order:normal;">Vendor req 23</text></svg>
<svg class="ab" style="left:0;top:0;overflow:visible" width="1" height="1"><text transform="translate(223.50 244.90) scale(0.838888888888889 1)" fill="#1a1a1a" text-anchor="middle" style="font-family:'Liberation Mono',monospace;font-size:9.0px;font-weight:normal;white-space:pre;stroke:#1a1a1a;stroke-width:0.24px;paint-order:normal;">35</text></svg>
<svg class="ab" style="left:0;top:0;overflow:visible" width="1" height="1"><text transform="translate(257.50 244.90) scale(0.838888888888889 1)" fill="#1a1a1a" text-anchor="middle" style="font-family:'Liberation Mono',monospace;font-size:9.0px;font-weight:normal;white-space:pre;stroke:#1a1a1a;stroke-width:0.24px;paint-order:normal;">0</text></svg>
<svg class="ab" style="left:0;top:0;overflow:visible" width="1" height="1"><text transform="translate(359.00 244.90) scale(0.838888888888889 1)" fill="#1a1a1a" text-anchor="middle" style="font-family:'Liberation Mono',monospace;font-size:9.0px;font-weight:normal;white-space:pre;stroke:#1a1a1a;stroke-width:0.24px;paint-order:normal;">8E 00 00 00 00 01 05 00 ...</text></svg>
<div class="ab" style="left:13px;top:273.0px;width:430px;height:2px;background:#fafafa;"></div>
<svg class="ab" style="left:4px;top:258.5px" width="5" height="8"><path d="M1 1l3 3-3 3" fill="none" stroke="#a4a4a4" stroke-width="0.9"/></svg>
<div class="ab" style="left:13px;top:252.0px;width:115px;height:21px;background:#fff;border:1px solid #4a4a4a"></div>
<div class="ab" style="left:14px;top:252.5px;width:102px;height:9.5px;background:#1e90ff;"></div>
<div class="ab" style="left:116px;top:252.5px;width:11px;height:9.5px;background:#006400;"></div>
<div class="ab" style="left:116px;top:262.0px;width:1px;height:10px;background:#9a9a9a;"></div>
<svg class="ab" style="left:0;top:0;overflow:visible" width="1" height="1"><text transform="translate(65.00 259.80) scale(0.838888888888889 1)" fill="#e6f3ff" text-anchor="middle" style="font-family:'Liberation Mono',monospace;font-size:9.0px;font-weight:normal;white-space:pre;">Control In</text></svg>
<svg class="ab" style="left:0;top:0;overflow:visible" width="1" height="1"><text transform="translate(121.50 259.80) scale(0.838888888888889 1)" fill="#d8ecd8" text-anchor="middle" style="font-family:'Liberation Mono',monospace;font-size:9.0px;font-weight:normal;white-space:pre;">S</text></svg>
<svg class="ab" style="left:0;top:0;overflow:visible" width="1" height="1"><text transform="translate(65.00 269.80) scale(0.838888888888889 1)" fill="#1a1a1a" text-anchor="middle" style="font-family:'Liberation Mono',monospace;font-size:9.0px;font-weight:normal;white-space:pre;stroke:#1a1a1a;stroke-width:0.24px;paint-order:normal;">395.855666 ms</text></svg>
<svg class="ab" style="left:0;top:0;overflow:visible" width="1" height="1"><text transform="translate(122.00 269.80) scale(0.838888888888889 1)" fill="#1a1a1a" text-anchor="middle" style="font-family:'Liberation Mono',monospace;font-size:9.0px;font-weight:normal;white-space:pre;stroke:#1a1a1a;stroke-width:0.24px;paint-order:normal;">F</text></svg>
<div class="ab" style="left:138px;top:252.0px;width:310px;height:21px;background:#fff;border:1px solid #4a4a4a"></div>
<div class="ab" style="left:139px;top:252.5px;width:67px;height:9.5px;background:#bdbd78;"></div>
<div class="ab" style="left:207px;top:252.5px;width:33px;height:9.5px;background:#808080;"></div>
<div class="ab" style="left:241px;top:252.5px;width:33px;height:9.5px;background:#c0c0c0;"></div>
<div class="ab" style="left:275px;top:252.5px;width:170px;height:9.5px;background:#8b0000;"></div>
<div class="ab" style="left:206px;top:252.0px;width:1px;height:21px;background:#4a4a4a;"></div>
<div class="ab" style="left:240px;top:252.0px;width:1px;height:21px;background:#4a4a4a;"></div>
<div class="ab" style="left:274px;top:252.0px;width:1px;height:21px;background:#4a4a4a;"></div>
<svg class="ab" style="left:0;top:0;overflow:visible" width="1" height="1"><text transform="translate(172.50 259.80) scale(0.838888888888889 1)" fill="#2a2a2a" text-anchor="middle" style="font-family:'Liberation Mono',monospace;font-size:9.0px;font-weight:normal;white-space:pre;stroke:#2a2a2a;stroke-width:0.2px;paint-order:normal;">Request</text></svg>
<svg class="ab" style="left:0;top:0;overflow:visible" width="1" height="1"><text transform="translate(223.50 259.80) scale(0.838888888888889 1)" fill="#d6d6d6" text-anchor="middle" style="font-family:'Liberation Mono',monospace;font-size:9.0px;font-weight:normal;white-space:pre;">ADDR</text></svg>
<svg class="ab" style="left:0;top:0;overflow:visible" width="1" height="1"><text transform="translate(257.50 259.80) scale(0.838888888888889 1)" fill="#333" text-anchor="middle" style="font-family:'Liberation Mono',monospace;font-size:9.0px;font-weight:normal;white-space:pre;stroke:#333;stroke-width:0.2px;paint-order:normal;">ENDP</text></svg>
<svg class="ab" style="left:0;top:0;overflow:visible" width="1" height="1"><text transform="translate(359.00 259.80) scale(0.838888888888889 1)" fill="#f2dede" text-anchor="middle" style="font-family:'Liberation Mono',monospace;font-size:9.0px;font-weight:normal;white-space:pre;">DATA ( 18bytes)</text></svg>
<svg class="ab" style="left:0;top:0;overflow:visible" width="1" height="1"><text transform="translate(204.30 269.80) scale(0.838888888888889 1)" fill="#1a1a1a" text-anchor="end" style="font-family:'Liberation Mono',monospace;font-size:9.0px;font-weight:normal;white-space:pre;stroke:#1a1a1a;stroke-width:0.24px;paint-order:normal;">Get Descriptor</text></svg>
<svg class="ab" style="left:0;top:0;overflow:visible" width="1" height="1"><text transform="translate(223.50 269.80) scale(0.838888888888889 1)" fill="#1a1a1a" text-anchor="middle" style="font-family:'Liberation Mono',monospace;font-size:9.0px;font-weight:normal;white-space:pre;stroke:#1a1a1a;stroke-width:0.24px;paint-order:normal;">35</text></svg>
<svg class="ab" style="left:0;top:0;overflow:visible" width="1" height="1"><text transform="translate(257.50 269.80) scale(0.838888888888889 1)" fill="#1a1a1a" text-anchor="middle" style="font-family:'Liberation Mono',monospace;font-size:9.0px;font-weight:normal;white-space:pre;stroke:#1a1a1a;stroke-width:0.24px;paint-order:normal;">0</text></svg>
<svg class="ab" style="left:0;top:0;overflow:visible" width="1" height="1"><text transform="translate(359.00 269.80) scale(0.838888888888889 1)" fill="#1a1a1a" text-anchor="middle" style="font-family:'Liberation Mono',monospace;font-size:9.0px;font-weight:normal;white-space:pre;stroke:#1a1a1a;stroke-width:0.24px;paint-order:normal;">12 01 00 02 00 00 00 40 ...</text></svg>
<div class="ab" style="left:13px;top:297.9px;width:430px;height:2px;background:#fafafa;"></div>
<svg class="ab" style="left:4px;top:283.4px" width="5" height="8"><path d="M1 1l3 3-3 3" fill="none" stroke="#a4a4a4" stroke-width="0.9"/></svg>
<div class="ab" style="left:13px;top:276.9px;width:115px;height:21px;background:#fff;border:1px solid #4a4a4a"></div>
<div class="ab" style="left:14px;top:277.4px;width:102px;height:9.5px;background:#1e90ff;"></div>
<div class="ab" style="left:116px;top:277.4px;width:11px;height:9.5px;background:#006400;"></div>
<div class="ab" style="left:116px;top:286.9px;width:1px;height:10px;background:#9a9a9a;"></div>
<svg class="ab" style="left:0;top:0;overflow:visible" width="1" height="1"><text transform="translate(65.00 284.70) scale(0.838888888888889 1)" fill="#e6f3ff" text-anchor="middle" style="font-family:'Liberation Mono',monospace;font-size:9.0px;font-weight:normal;white-space:pre;">Control In</text></svg>
<svg class="ab" style="left:0;top:0;overflow:visible" width="1" height="1"><text transform="translate(121.50 284.70) scale(0.838888888888889 1)" fill="#d8ecd8" text-anchor="middle" style="font-family:'Liberation Mono',monospace;font-size:9.0px;font-weight:normal;white-space:pre;">S</text></svg>
<svg class="ab" style="left:0;top:0;overflow:visible" width="1" height="1"><text transform="translate(65.00 294.70) scale(0.838888888888889 1)" fill="#1a1a1a" text-anchor="middle" style="font-family:'Liberation Mono',monospace;font-size:9.0px;font-weight:normal;white-space:pre;stroke:#1a1a1a;stroke-width:0.24px;paint-order:normal;">405.125500 ms</text></svg>
<svg class="ab" style="left:0;top:0;overflow:visible" width="1" height="1"><text transform="translate(122.00 294.70) scale(0.838888888888889 1)" fill="#1a1a1a" text-anchor="middle" style="font-family:'Liberation Mono',monospace;font-size:9.0px;font-weight:normal;white-space:pre;stroke:#1a1a1a;stroke-width:0.24px;paint-order:normal;">F</text></svg>
<div class="ab" style="left:138px;top:276.9px;width:310px;height:21px;background:#fff;border:1px solid #4a4a4a"></div>
<div class="ab" style="left:139px;top:277.4px;width:67px;height:9.5px;background:#bdbd78;"></div>
<div class="ab" style="left:207px;top:277.4px;width:33px;height:9.5px;background:#808080;"></div>
<div class="ab" style="left:241px;top:277.4px;width:33px;height:9.5px;background:#c0c0c0;"></div>
<div class="ab" style="left:275px;top:277.4px;width:170px;height:9.5px;background:#8b0000;"></div>
<div class="ab" style="left:206px;top:276.9px;width:1px;height:21px;background:#4a4a4a;"></div>
<div class="ab" style="left:240px;top:276.9px;width:1px;height:21px;background:#4a4a4a;"></div>
<div class="ab" style="left:274px;top:276.9px;width:1px;height:21px;background:#4a4a4a;"></div>
<svg class="ab" style="left:0;top:0;overflow:visible" width="1" height="1"><text transform="translate(172.50 284.70) scale(0.838888888888889 1)" fill="#2a2a2a" text-anchor="middle" style="font-family:'Liberation Mono',monospace;font-size:9.0px;font-weight:normal;white-space:pre;stroke:#2a2a2a;stroke-width:0.2px;paint-order:normal;">Request</text></svg>
<svg class="ab" style="left:0;top:0;overflow:visible" width="1" height="1"><text transform="translate(223.50 284.70) scale(0.838888888888889 1)" fill="#d6d6d6" text-anchor="middle" style="font-family:'Liberation Mono',monospace;font-size:9.0px;font-weight:normal;white-space:pre;">ADDR</text></svg>
<svg class="ab" style="left:0;top:0;overflow:visible" width="1" height="1"><text transform="translate(257.50 284.70) scale(0.838888888888889 1)" fill="#333" text-anchor="middle" style="font-family:'Liberation Mono',monospace;font-size:9.0px;font-weight:normal;white-space:pre;stroke:#333;stroke-width:0.2px;paint-order:normal;">ENDP</text></svg>
<svg class="ab" style="left:0;top:0;overflow:visible" width="1" height="1"><text transform="translate(359.00 284.70) scale(0.838888888888889 1)" fill="#f2dede" text-anchor="middle" style="font-family:'Liberation Mono',monospace;font-size:9.0px;font-weight:normal;white-space:pre;">DATA ( 9bytes)</text></svg>
<svg class="ab" style="left:0;top:0;overflow:visible" width="1" height="1"><text transform="translate(204.30 294.70) scale(0.838888888888889 1)" fill="#1a1a1a" text-anchor="end" style="font-family:'Liberation Mono',monospace;font-size:9.0px;font-weight:normal;white-space:pre;stroke:#1a1a1a;stroke-width:0.24px;paint-order:normal;">Get Descriptor</text></svg>
<svg class="ab" style="left:0;top:0;overflow:visible" width="1" height="1"><text transform="translate(223.50 294.70) scale(0.838888888888889 1)" fill="#1a1a1a" text-anchor="middle" style="font-family:'Liberation Mono',monospace;font-size:9.0px;font-weight:normal;white-space:pre;stroke:#1a1a1a;stroke-width:0.24px;paint-order:normal;">35</text></svg>
<svg class="ab" style="left:0;top:0;overflow:visible" width="1" height="1"><text transform="translate(257.50 294.70) scale(0.838888888888889 1)" fill="#1a1a1a" text-anchor="middle" style="font-family:'Liberation Mono',monospace;font-size:9.0px;font-weight:normal;white-space:pre;stroke:#1a1a1a;stroke-width:0.24px;paint-order:normal;">0</text></svg>
<svg class="ab" style="left:0;top:0;overflow:visible" width="1" height="1"><text transform="translate(359.00 294.70) scale(0.838888888888889 1)" fill="#1a1a1a" text-anchor="middle" style="font-family:'Liberation Mono',monospace;font-size:9.0px;font-weight:normal;white-space:pre;stroke:#1a1a1a;stroke-width:0.24px;paint-order:normal;">09 02 20 00 01 01 00 80 ...</text></svg>
</div>
<div class="ab" style="left:436px;top:82px;width:10px;height:313px;background:#f0f0f0;"></div>
<div class="ab" style="left:437px;top:141px;width:8px;height:195px;background:#cdcdcd;"></div>
<svg class="ab" style="left:436px;top:82px" width="10" height="313"><path d="M3 6l2-2 2 2M3 306.5l2 2 2-2" fill="none" stroke="#555" stroke-width="0.9"/></svg>
<div class="ab" style="left:448px;top:35px;width:320px;height:9px;background:#dadada;"></div>
<svg class="ab" style="left:451.00px;top:36.00px" width="6.5" height="7" viewBox="0 0 10 10" preserveAspectRatio="none"><path d="M1 1h3.4v8H1zM1 5h3.4M5.8 0.5v9M5.8 2.2h3.6M7.6 4.2v5.4M5.8 6h3.8" fill="none" stroke="#333" stroke-width="1.4"/></svg>
<svg class="ab" style="left:458.00px;top:36.00px" width="6.5" height="7" viewBox="0 0 10 10" preserveAspectRatio="none"><path d="M3 0.5L1 5M2.2 3.2V9.8M4.4 3h5.2M4 6.2h5.8M7 0.5V9.8" fill="none" stroke="#333" stroke-width="1.4"/></svg>
<svg class="ab" style="left:465.00px;top:36.00px" width="6.5" height="7" viewBox="0 0 10 10" preserveAspectRatio="none"><path d="M1.8 0.4v1.2M0.4 2.2h3L1 6.2M2 4.6v5.2M4.6 0.8h4.6v5.4h-4.6zM6.2 6.2L4.4 9.6M7.6 6.2v3.2h1.8" fill="none" stroke="#333" stroke-width="1.4"/></svg>
<svg class="ab" style="left:472.00px;top:36.00px" width="6.5" height="7" viewBox="0 0 10 10" preserveAspectRatio="none"><path d="M0.6 2h8.8M5 0.4v1.6M2 3.6h6v2.4H2zM1 7.4h8M3 9.6L5 7.6L7 9.6" fill="none" stroke="#333" stroke-width="1.4"/></svg>
<svg class="ab" style="left:750px;top:35px" width="18" height="9"><path d="M1.5 3.5h4v4h-4zM2.5 2.5h4v4" fill="none" stroke="#222" stroke-width="1"/><path d="M11.5 2l4.5 5M16 2l-4.5 5" stroke="#222" stroke-width="1.1"/></svg>
<div class="ab" style="left:455px;top:52px;width:307px;height:203px;background:#fff;border:1px solid #5ea6e8"></div>
<svg class="ab" style="left:0;top:0;overflow:visible" width="1" height="1"><text transform="translate(461.75 66.90) scale(0.722 1)" fill="#111" text-anchor="middle" style="font-family:'Liberation Serif',serif;font-size:14px;font-weight:normal;white-space:pre;stroke:#111;stroke-width:0.5px;">V</text><text transform="translate(469.05 66.90) scale(1.057 1)" fill="#111" text-anchor="middle" style="font-family:'Liberation Serif',serif;font-size:14px;font-weight:normal;white-space:pre;stroke:#111;stroke-width:0.5px;">e</text><text transform="translate(476.35 66.90) scale(0.939 1)" fill="#111" text-anchor="middle" style="font-family:'Liberation Serif',serif;font-size:14px;font-weight:normal;white-space:pre;stroke:#111;stroke-width:0.5px;">n</text><text transform="translate(483.65 66.90) scale(0.939 1)" fill="#111" text-anchor="middle" style="font-family:'Liberation Serif',serif;font-size:14px;font-weight:normal;white-space:pre;stroke:#111;stroke-width:0.5px;">d</text><text transform="translate(490.95 66.90) scale(0.939 1)" fill="#111" text-anchor="middle" style="font-family:'Liberation Serif',serif;font-size:14px;font-weight:normal;white-space:pre;stroke:#111;stroke-width:0.5px;">o</text><text transform="translate(498.25 66.90) scale(1.250 1)" fill="#111" text-anchor="middle" style="font-family:'Liberation Serif',serif;font-size:14px;font-weight:normal;white-space:pre;stroke:#111;stroke-width:0.5px;">r</text><text transform="translate(512.85 66.90) scale(1.250 1)" fill="#111" text-anchor="middle" style="font-family:'Liberation Serif',serif;font-size:14px;font-weight:normal;white-space:pre;stroke:#111;stroke-width:0.5px;">r</text><text transform="translate(520.15 66.90) scale(1.057 1)" fill="#111" text-anchor="middle" style="font-family:'Liberation Serif',serif;font-size:14px;font-weight:normal;white-space:pre;stroke:#111;stroke-width:0.5px;">e</text><text transform="translate(527.45 66.90) scale(0.939 1)" fill="#111" text-anchor="middle" style="font-family:'Liberation Serif',serif;font-size:14px;font-weight:normal;white-space:pre;stroke:#111;stroke-width:0.5px;">q</text><text transform="translate(534.75 66.90) scale(0.939 1)" fill="#111" text-anchor="middle" style="font-family:'Liberation Serif',serif;font-size:14px;font-weight:normal;white-space:pre;stroke:#111;stroke-width:0.5px;">u</text><text transform="translate(542.05 66.90) scale(1.057 1)" fill="#111" text-anchor="middle" style="font-family:'Liberation Serif',serif;font-size:14px;font-weight:normal;white-space:pre;stroke:#111;stroke-width:0.5px;">e</text><text transform="translate(549.35 66.90) scale(1.206 1)" fill="#111" text-anchor="middle" style="font-family:'Liberation Serif',serif;font-size:14px;font-weight:normal;white-space:pre;stroke:#111;stroke-width:0.5px;">s</text><text transform="translate(556.65 66.90) scale(1.250 1)" fill="#111" text-anchor="middle" style="font-family:'Liberation Serif',serif;font-size:14px;font-weight:normal;white-space:pre;stroke:#111;stroke-width:0.5px;">t</text></svg>
<div class="ab" style="left:459px;top:78px;width:56px;height:12px;background:#6db3f2;"></div>
<div class="ab" style="left:516px;top:78px;width:68px;height:12px;background:#6db3f2;"></div>
<div class="ab" style="left:585px;top:78px;width:72px;height:12px;background:#6db3f2;"></div>
<svg class="ab" style="left:0;top:0;overflow:visible" width="1" height="1"><text x="467.25 472.75 478.25" y="86.90" fill="#111" text-anchor="middle" style="font-family:'Liberation Serif',serif;font-size:10.7px;font-weight:bold;white-space:pre;stroke:#111;stroke-width:0.2px;">iel</text><text transform="translate(461.75 86.90) scale(0.841 1)" fill="#111" text-anchor="middle" style="font-family:'Liberation Serif',serif;font-size:10.7px;font-weight:bold;white-space:pre;stroke:#111;stroke-width:0.2px;">F</text><text transform="translate(483.75 86.90) scale(0.924 1)" fill="#111" text-anchor="middle" style="font-family:'Liberation Serif',serif;font-size:10.7px;font-weight:bold;white-space:pre;stroke:#111;stroke-width:0.2px;">d</text></svg>
<svg class="ab" style="left:0;top:0;overflow:visible" width="1" height="1"><text x="524.25 529.75 540.75" y="86.90" fill="#111" text-anchor="middle" style="font-family:'Liberation Serif',serif;font-size:10.7px;font-weight:bold;white-space:pre;stroke:#111;stroke-width:0.2px;">ale</text><text transform="translate(518.75 86.90) scale(0.712 1)" fill="#111" text-anchor="middle" style="font-family:'Liberation Serif',serif;font-size:10.7px;font-weight:bold;white-space:pre;stroke:#111;stroke-width:0.2px;">V</text><text transform="translate(535.25 86.90) scale(0.924 1)" fill="#111" text-anchor="middle" style="font-family:'Liberation Serif',serif;font-size:10.7px;font-weight:bold;white-space:pre;stroke:#111;stroke-width:0.2px;">u</text></svg>
<svg class="ab" style="left:0;top:0;overflow:visible" width="1" height="1"><text x="593.75 599.25 604.75 610.25 615.75 626.75 632.25 637.75" y="86.90" fill="#111" text-anchor="middle" style="font-family:'Liberation Serif',serif;font-size:10.7px;font-weight:bold;white-space:pre;stroke:#111;stroke-width:0.2px;">escritio</text><text transform="translate(588.25 86.90) scale(0.712 1)" fill="#111" text-anchor="middle" style="font-family:'Liberation Serif',serif;font-size:10.7px;font-weight:bold;white-space:pre;stroke:#111;stroke-width:0.2px;">D</text><text transform="translate(621.25 86.90) scale(0.924 1)" fill="#111" text-anchor="middle" style="font-family:'Liberation Serif',serif;font-size:10.7px;font-weight:bold;white-space:pre;stroke:#111;stroke-width:0.2px;">p</text><text transform="translate(643.25 86.90) scale(0.924 1)" fill="#111" text-anchor="middle" style="font-family:'Liberation Serif',serif;font-size:10.7px;font-weight:bold;white-space:pre;stroke:#111;stroke-width:0.2px;">n</text></svg>
<svg class="ab" style="left:0;top:0;overflow:visible" width="1" height="1"><text x="461.50 476.50 481.50 486.50 491.50 496.50 501.50" y="99.10" fill="#222" text-anchor="middle" style="font-family:'Liberation Serif',serif;font-size:9.6px;font-weight:normal;white-space:pre;stroke:#222;stroke-width:0.16px;">bequest</text><text transform="translate(466.50 99.10) scale(0.670 1)" fill="#222" text-anchor="middle" style="font-family:'Liberation Serif',serif;font-size:9.6px;font-weight:normal;white-space:pre;stroke:#222;stroke-width:0.16px;">m</text><text transform="translate(471.50 99.10) scale(0.781 1)" fill="#222" text-anchor="middle" style="font-family:'Liberation Serif',serif;font-size:9.6px;font-weight:normal;white-space:pre;stroke:#222;stroke-width:0.16px;">R</text></svg>
<svg class="ab" style="left:0;top:0;overflow:visible" width="1" height="1"><text x="518.80 523.20 527.60 532.00 536.40 540.80 545.20 549.60 558.40 562.80 567.20 576.00 580.40" y="98.30" fill="#333" text-anchor="middle" style="font-family:'Liberation Serif',serif;font-size:7.5px;font-weight:normal;white-space:pre;stroke:#333;stroke-width:0.1px;">11000000(0x0)</text><text transform="translate(571.60 98.30) scale(0.880 1)" fill="#333" text-anchor="middle" style="font-family:'Liberation Serif',serif;font-size:7.5px;font-weight:normal;white-space:pre;stroke:#333;stroke-width:0.1px;">C</text></svg>
<svg class="ab" style="left:0;top:0;overflow:visible" width="1" height="1"><text x="476.50 481.50 486.50 491.50 496.50 501.50 506.50 511.50" y="112.10" fill="#222" text-anchor="middle" style="font-family:'Liberation Serif',serif;font-size:9.6px;font-weight:normal;white-space:pre;stroke:#222;stroke-width:0.16px;">ecipient</text><text transform="translate(471.50 112.10) scale(0.781 1)" fill="#222" text-anchor="middle" style="font-family:'Liberation Serif',serif;font-size:9.6px;font-weight:normal;white-space:pre;stroke:#222;stroke-width:0.16px;">R</text></svg>
<svg class="ab" style="left:0;top:0;overflow:visible" width="1" height="1"><text x="518.80 523.20 527.60 532.00 536.40 540.80 545.20 549.60 558.40 562.80 567.20 571.60 576.00 580.40" y="111.30" fill="#333" text-anchor="middle" style="font-family:'Liberation Serif',serif;font-size:7.5px;font-weight:normal;white-space:pre;stroke:#333;stroke-width:0.1px;">...00000(0x00)</text></svg>
<svg class="ab" style="left:0;top:0;overflow:visible" width="1" height="1"><text x="592.50 597.50 602.50 607.50 612.50" y="112.10" fill="#222" text-anchor="middle" style="font-family:'Liberation Serif',serif;font-size:9.6px;font-weight:normal;white-space:pre;stroke:#222;stroke-width:0.16px;">evice</text><text transform="translate(587.50 112.10) scale(0.721 1)" fill="#222" text-anchor="middle" style="font-family:'Liberation Serif',serif;font-size:9.6px;font-weight:normal;white-space:pre;stroke:#222;stroke-width:0.16px;">D</text></svg>
<svg class="ab" style="left:0;top:0;overflow:visible" width="1" height="1"><text x="476.50 481.50 486.50" y="125.10" fill="#222" text-anchor="middle" style="font-family:'Liberation Serif',serif;font-size:9.6px;font-weight:normal;white-space:pre;stroke:#222;stroke-width:0.16px;">ype</text><text transform="translate(471.50 125.10) scale(0.853 1)" fill="#222" text-anchor="middle" style="font-family:'Liberation Serif',serif;font-size:9.6px;font-weight:normal;white-space:pre;stroke:#222;stroke-width:0.16px;">T</text></svg>
<svg class="ab" style="left:0;top:0;overflow:visible" width="1" height="1"><text x="518.80 523.20 527.60 532.00 536.40 540.80 545.20 549.60 558.40 562.80 567.20 571.60 576.00 580.40" y="124.30" fill="#333" text-anchor="middle" style="font-family:'Liberation Serif',serif;font-size:7.5px;font-weight:normal;white-space:pre;stroke:#333;stroke-width:0.1px;">.10.....(0x02)</text></svg>
<svg class="ab" style="left:0;top:0;overflow:visible" width="1" height="1"><text x="592.50 597.50 602.50 607.50 612.50" y="125.10" fill="#222" text-anchor="middle" style="font-family:'Liberation Serif',serif;font-size:9.6px;font-weight:normal;white-space:pre;stroke:#222;stroke-width:0.16px;">endor</text><text transform="translate(587.50 125.10) scale(0.721 1)" fill="#222" text-anchor="middle" style="font-family:'Liberation Serif',serif;font-size:9.6px;font-weight:normal;white-space:pre;stroke:#222;stroke-width:0.16px;">V</text></svg>
<svg class="ab" style="left:0;top:0;overflow:visible" width="1" height="1"><text x="476.50 481.50 486.50 491.50 496.50 501.50 506.50 511.50" y="138.10" fill="#222" text-anchor="middle" style="font-family:'Liberation Serif',serif;font-size:9.6px;font-weight:normal;white-space:pre;stroke:#222;stroke-width:0.16px;">irection</text><text transform="translate(471.50 138.10) scale(0.721 1)" fill="#222" text-anchor="middle" style="font-family:'Liberation Serif',serif;font-size:9.6px;font-weight:normal;white-space:pre;stroke:#222;stroke-width:0.16px;">D</text></svg>
<svg class="ab" style="left:0;top:0;overflow:visible" width="1" height="1"><text x="518.80 523.20 527.60 532.00 536.40 540.80 545.20 549.60 558.40 562.80 567.20 571.60 576.00 580.40" y="137.30" fill="#333" text-anchor="middle" style="font-family:'Liberation Serif',serif;font-size:7.5px;font-weight:normal;white-space:pre;stroke:#333;stroke-width:0.1px;">1.......(0x01)</text></svg>
<svg class="ab" style="left:0;top:0;overflow:visible" width="1" height="1"><text x="592.50 597.50 602.50 607.50 612.50 622.50 627.50 642.50 647.50 652.50" y="138.10" fill="#222" text-anchor="middle" style="font-family:'Liberation Serif',serif;font-size:9.6px;font-weight:normal;white-space:pre;stroke:#222;stroke-width:0.16px;">evicetoost</text><text transform="translate(587.50 138.10) scale(0.721 1)" fill="#222" text-anchor="middle" style="font-family:'Liberation Serif',serif;font-size:9.6px;font-weight:normal;white-space:pre;stroke:#222;stroke-width:0.16px;">D</text><text transform="translate(637.50 138.10) scale(0.721 1)" fill="#222" text-anchor="middle" style="font-family:'Liberation Serif',serif;font-size:9.6px;font-weight:normal;white-space:pre;stroke:#222;stroke-width:0.16px;">H</text></svg>
<div class="ab" style="left:459px;top:143px;width:56px;height:12px;background:#d3d3d3;"></div>
<div class="ab" style="left:516px;top:143px;width:68px;height:12px;background:#d3d3d3;"></div>
<div class="ab" style="left:585px;top:143px;width:72px;height:12px;background:#d3d3d3;"></div>
<svg class="ab" style="left:0;top:0;overflow:visible" width="1" height="1"><text x="461.50 471.50 476.50 481.50 486.50 491.50 496.50" y="151.10" fill="#222" text-anchor="middle" style="font-family:'Liberation Serif',serif;font-size:9.6px;font-weight:normal;white-space:pre;stroke:#222;stroke-width:0.16px;">bequest</text><text transform="translate(466.50 151.10) scale(0.781 1)" fill="#222" text-anchor="middle" style="font-family:'Liberation Serif',serif;font-size:9.6px;font-weight:normal;white-space:pre;stroke:#222;stroke-width:0.16px;">R</text></svg>
<svg class="ab" style="left:0;top:0;overflow:visible" width="1" height="1"><text x="518.50 523.50" y="151.10" fill="#222" text-anchor="middle" style="font-family:'Liberation Serif',serif;font-size:9.6px;font-weight:normal;white-space:pre;stroke:#222;stroke-width:0.16px;">23</text></svg>
<svg class="ab" style="left:0;top:0;overflow:visible" width="1" height="1"><text x="592.50 597.50 602.50 607.50 612.50 622.50 627.50 632.50 642.50 647.50" y="151.10" fill="#222" text-anchor="middle" style="font-family:'Liberation Serif',serif;font-size:9.6px;font-weight:normal;white-space:pre;stroke:#222;stroke-width:0.16px;">endorreq23</text><text transform="translate(587.50 151.10) scale(0.721 1)" fill="#222" text-anchor="middle" style="font-family:'Liberation Serif',serif;font-size:9.6px;font-weight:normal;white-space:pre;stroke:#222;stroke-width:0.16px;">V</text></svg>
<svg class="ab" style="left:0;top:0;overflow:visible" width="1" height="1"><text x="471.50 476.50 481.50 486.50" y="164.10" fill="#222" text-anchor="middle" style="font-family:'Liberation Serif',serif;font-size:9.6px;font-weight:normal;white-space:pre;stroke:#222;stroke-width:0.16px;">alue</text><text transform="translate(461.50 164.10) scale(0.721 1)" fill="#222" text-anchor="middle" style="font-family:'Liberation Serif',serif;font-size:9.6px;font-weight:normal;white-space:pre;stroke:#222;stroke-width:0.16px;">w</text><text transform="translate(466.50 164.10) scale(0.721 1)" fill="#222" text-anchor="middle" style="font-family:'Liberation Serif',serif;font-size:9.6px;font-weight:normal;white-space:pre;stroke:#222;stroke-width:0.16px;">V</text></svg>
<svg class="ab" style="left:0;top:0;overflow:visible" width="1" height="1"><text x="518.50 523.50 528.50 533.50 538.50 543.50" y="164.10" fill="#222" text-anchor="middle" style="font-family:'Liberation Serif',serif;font-size:9.6px;font-weight:normal;white-space:pre;stroke:#222;stroke-width:0.16px;">0x0000</text></svg>
<div class="ab" style="left:459px;top:169px;width:56px;height:12px;background:#d3d3d3;"></div>
<div class="ab" style="left:516px;top:169px;width:68px;height:12px;background:#d3d3d3;"></div>
<div class="ab" style="left:585px;top:169px;width:72px;height:12px;background:#d3d3d3;"></div>
<svg class="ab" style="left:0;top:0;overflow:visible" width="1" height="1"><text x="466.50 471.50 476.50 481.50 486.50" y="177.10" fill="#222" text-anchor="middle" style="font-family:'Liberation Serif',serif;font-size:9.6px;font-weight:normal;white-space:pre;stroke:#222;stroke-width:0.16px;">Index</text><text transform="translate(461.50 177.10) scale(0.721 1)" fill="#222" text-anchor="middle" style="font-family:'Liberation Serif',serif;font-size:9.6px;font-weight:normal;white-space:pre;stroke:#222;stroke-width:0.16px;">w</text></svg>
<svg class="ab" style="left:0;top:0;overflow:visible" width="1" height="1"><text x="518.50" y="177.10" fill="#222" text-anchor="middle" style="font-family:'Liberation Serif',serif;font-size:9.6px;font-weight:normal;white-space:pre;stroke:#222;stroke-width:0.16px;">4</text></svg>
<svg class="ab" style="left:0;top:0;overflow:visible" width="1" height="1"><text x="471.50 476.50 481.50 486.50 491.50" y="190.10" fill="#222" text-anchor="middle" style="font-family:'Liberation Serif',serif;font-size:9.6px;font-weight:normal;white-space:pre;stroke:#222;stroke-width:0.16px;">ength</text><text transform="translate(461.50 190.10) scale(0.721 1)" fill="#222" text-anchor="middle" style="font-family:'Liberation Serif',serif;font-size:9.6px;font-weight:normal;white-space:pre;stroke:#222;stroke-width:0.16px;">w</text><text transform="translate(466.50 190.10) scale(0.853 1)" fill="#222" text-anchor="middle" style="font-family:'Liberation Serif',serif;font-size:9.6px;font-weight:normal;white-space:pre;stroke:#222;stroke-width:0.16px;">L</text></svg>
<svg class="ab" style="left:0;top:0;overflow:visible" width="1" height="1"><text x="518.50 523.50" y="190.10" fill="#222" text-anchor="middle" style="font-family:'Liberation Serif',serif;font-size:9.6px;font-weight:normal;white-space:pre;stroke:#222;stroke-width:0.16px;">40</text></svg>
<svg class="ab" style="left:0;top:0;overflow:visible" width="1" height="1"><text transform="translate(461.09 207.30) scale(0.678 1)" fill="#111" text-anchor="middle" style="font-family:'Liberation Serif',serif;font-size:14px;font-weight:bold;white-space:pre;stroke:#111;stroke-width:0.2px;">G</text><text transform="translate(468.47 207.30) scale(1.069 1)" fill="#111" text-anchor="middle" style="font-family:'Liberation Serif',serif;font-size:14px;font-weight:bold;white-space:pre;stroke:#111;stroke-width:0.2px;">e</text><text transform="translate(475.85 207.30) scale(1.200 1)" fill="#111" text-anchor="middle" style="font-family:'Liberation Serif',serif;font-size:14px;font-weight:bold;white-space:pre;stroke:#111;stroke-width:0.2px;">t</text><text transform="translate(490.61 207.30) scale(0.949 1)" fill="#111" text-anchor="middle" style="font-family:'Liberation Serif',serif;font-size:14px;font-weight:bold;white-space:pre;stroke:#111;stroke-width:0.2px;">4</text><text transform="translate(497.99 207.30) scale(0.949 1)" fill="#111" text-anchor="middle" style="font-family:'Liberation Serif',serif;font-size:14px;font-weight:bold;white-space:pre;stroke:#111;stroke-width:0.2px;">0</text><text transform="translate(512.75 207.30) scale(0.948 1)" fill="#111" text-anchor="middle" style="font-family:'Liberation Serif',serif;font-size:14px;font-weight:bold;white-space:pre;stroke:#111;stroke-width:0.2px;">b</text><text transform="translate(520.13 207.30) scale(0.949 1)" fill="#111" text-anchor="middle" style="font-family:'Liberation Serif',serif;font-size:14px;font-weight:bold;white-space:pre;stroke:#111;stroke-width:0.2px;">y</text><text transform="translate(527.51 207.30) scale(1.200 1)" fill="#111" text-anchor="middle" style="font-family:'Liberation Serif',serif;font-size:14px;font-weight:bold;white-space:pre;stroke:#111;stroke-width:0.2px;">t</text><text transform="translate(534.89 207.30) scale(1.069 1)" fill="#111" text-anchor="middle" style="font-family:'Liberation Serif',serif;font-size:14px;font-weight:bold;white-space:pre;stroke:#111;stroke-width:0.2px;">e</text><text transform="translate(542.27 207.30) scale(1.200 1)" fill="#111" text-anchor="middle" style="font-family:'Liberation Serif',serif;font-size:14px;font-weight:bold;white-space:pre;stroke:#111;stroke-width:0.2px;">s</text><text transform="translate(557.03 207.30) scale(0.948 1)" fill="#111" text-anchor="middle" style="font-family:'Liberation Serif',serif;font-size:14px;font-weight:bold;white-space:pre;stroke:#111;stroke-width:0.2px;">d</text><text transform="translate(564.41 207.30) scale(0.949 1)" fill="#111" text-anchor="middle" style="font-family:'Liberation Serif',serif;font-size:14px;font-weight:bold;white-space:pre;stroke:#111;stroke-width:0.2px;">a</text><text transform="translate(571.79 207.30) scale(1.200 1)" fill="#111" text-anchor="middle" style="font-family:'Liberation Serif',serif;font-size:14px;font-weight:bold;white-space:pre;stroke:#111;stroke-width:0.2px;">t</text><text transform="translate(579.17 207.30) scale(0.949 1)" fill="#111" text-anchor="middle" style="font-family:'Liberation Serif',serif;font-size:14px;font-weight:bold;white-space:pre;stroke:#111;stroke-width:0.2px;">a</text></svg>
<svg class="ab" style="left:0;top:0;overflow:visible" width="1" height="1"><text x="462.48 465.88 469.26 472.65 476.04 479.44 486.21 489.60 496.38 499.77 503.16 506.55 516.73 520.12 523.50 526.89" y="222.30" fill="#222" text-anchor="middle" style="font-family:'Liberation Serif',serif;font-size:6.4px;font-weight:normal;white-space:pre;stroke:#222;stroke-width:0.16px;">isplayindataindo</text><text transform="translate(459.09 222.30) scale(0.733 1)" fill="#222" text-anchor="middle" style="font-family:'Liberation Serif',serif;font-size:6.4px;font-weight:normal;white-space:pre;stroke:#222;stroke-width:0.16px;">D</text><text transform="translate(513.34 222.30) scale(0.733 1)" fill="#222" text-anchor="middle" style="font-family:'Liberation Serif',serif;font-size:6.4px;font-weight:normal;white-space:pre;stroke:#222;stroke-width:0.16px;">w</text><text transform="translate(530.28 222.30) scale(0.733 1)" fill="#222" text-anchor="middle" style="font-family:'Liberation Serif',serif;font-size:6.4px;font-weight:normal;white-space:pre;stroke:#222;stroke-width:0.16px;">w</text></svg>
<svg class="ab" style="left:0;top:0" width="768" height="409"><path d="M652.90 147.90 L659.07 158.39 L658.69 154.50 L684.80 169.60 L661.17 150.86 L664.92 149.79z" fill="#f73b45"/><path d="M558.70 173.20 L565.65 183.19 L564.98 179.34 L608.00 201.50 L567.17 175.52 L570.83 174.17z" fill="#f73b45"/></svg>
<svg class="ab" style="left:0;top:0;overflow:visible" width="1" height="1"><text transform="translate(676.90 189.60) scale(1.0 1)" fill="#f2414b" text-anchor="start" style="font-family:'Liberation Sans',sans-serif;font-size:15px;font-weight:normal;white-space:pre;letter-spacing:-0.1px;stroke:#f2414b;stroke-width:0.3px;paint-order:normal;">vendor</text></svg>
<svg class="ab" style="left:0;top:0;overflow:visible" width="1" height="1"><text transform="translate(598.60 228.60) scale(1.0 1)" fill="#f2414b" text-anchor="start" style="font-family:'Liberation Sans',sans-serif;font-size:15px;font-weight:normal;white-space:pre;letter-spacing:-0.05px;stroke:#f2414b;stroke-width:0.3px;paint-order:normal;">extend compat ID</text></svg>
<div class="ab" style="left:448px;top:264px;width:320px;height:11px;background:#dadada;"></div>
<svg class="ab" style="left:451.00px;top:266.00px" width="6.5" height="7" viewBox="0 0 10 10" preserveAspectRatio="none"><path d="M1.2 1.4h7.6M5 1.4v7.2M0.6 8.6h8.8" fill="none" stroke="#333" stroke-width="1.4"/></svg>
<svg class="ab" style="left:458.00px;top:266.00px" width="6.5" height="7" viewBox="0 0 10 10" preserveAspectRatio="none"><path d="M0.8 0.8h8.4v8.6h-8.4zM3 2.4h4L3 6M4 4.2L7.2 6.4M3.8 7.6h2.6" fill="none" stroke="#333" stroke-width="1.4"/></svg>
<svg class="ab" style="left:465.00px;top:266.00px" width="6.5" height="7" viewBox="0 0 10 10" preserveAspectRatio="none"><path d="M5 0.5v1.6M0.8 2.6h8.4M2.6 3.6L8.2 9.6M7.4 3.6L1.4 9.6" fill="none" stroke="#333" stroke-width="1.4"/></svg>
<svg class="ab" style="left:472.00px;top:266.00px" width="6.5" height="7" viewBox="0 0 10 10" preserveAspectRatio="none"><path d="M2.4 0.8h5.2v6h-5.2zM2.4 2.8h5.2M2.4 4.8h5.2M0.6 7.2h8.8M3.2 8.2L1.2 9.8M6.8 8.2L8.8 9.8" fill="none" stroke="#333" stroke-width="1.4"/></svg>
<svg class="ab" style="left:750px;top:266px" width="18" height="9"><path d="M1.5 3.5h4v4h-4zM2.5 2.5h4v4" fill="none" stroke="#222" stroke-width="1"/><path d="M11.5 2l4.5 5M16 2l-4.5 5" stroke="#222" stroke-width="1.1"/></svg>
<div class="ab" style="left:455px;top:283px;width:50px;height:12px;background:#e1e1e1;border:1px solid #adadad"></div>
<div class="ab" style="left:508px;top:283px;width:50px;height:12px;background:#e1e1e1;border:1px solid #adadad"></div>
<svg class="ab" style="left:469.00px;top:285.00px" width="6.5" height="8" viewBox="0 0 10 10" preserveAspectRatio="none"><path d="M1 1h3.4v8H1zM1 5h3.4M5.8 0.5v9M5.8 2.2h3.6M7.6 4.2v5.4M5.8 6h3.8" fill="none" stroke="#444" stroke-width="1.15"/></svg>
<svg class="ab" style="left:476.00px;top:285.00px" width="6.5" height="8" viewBox="0 0 10 10" preserveAspectRatio="none"><path d="M3 0.5L1 5M2.2 3.2V9.8M4.4 3h5.2M4 6.2h5.8M7 0.5V9.8" fill="none" stroke="#444" stroke-width="1.15"/></svg>
<svg class="ab" style="left:483.00px;top:285.00px" width="6.5" height="8" viewBox="0 0 10 10" preserveAspectRatio="none"><path d="M1.8 0.4v1.2M0.4 2.2h3L1 6.2M2 4.6v5.2M4.6 0.8h4.6v5.4h-4.6zM6.2 6.2L4.4 9.6M7.6 6.2v3.2h1.8" fill="none" stroke="#444" stroke-width="1.15"/></svg>
<svg class="ab" style="left:520.00px;top:285.00px" width="6.5" height="8" viewBox="0 0 10 10" preserveAspectRatio="none"><path d="M0.6 2h8.8M5 0.4v1.6M2 3.6h6v2.4H2zM1 7.4h8M3 9.6L5 7.6L7 9.6" fill="none" stroke="#444" stroke-width="1.15"/></svg>
<svg class="ab" style="left:527.00px;top:285.00px" width="6.5" height="8" viewBox="0 0 10 10" preserveAspectRatio="none"><path d="M1.2 1.4h7.6M5 1.4v7.2M0.6 8.6h8.8" fill="none" stroke="#444" stroke-width="1.15"/></svg>
<svg class="ab" style="left:534.00px;top:285.00px" width="6.5" height="8" viewBox="0 0 10 10" preserveAspectRatio="none"><path d="M0.8 0.8h8.4v8.6h-8.4zM3 2.4h4L3 6M4 4.2L7.2 6.4M3.8 7.6h2.6" fill="none" stroke="#444" stroke-width="1.15"/></svg>
<div class="ab" style="left:561px;top:283px;width:80px;height:11px;background:#e6e6e6;border:1px solid #bdbdbd"></div>
<svg class="ab" style="left:0;top:0;overflow:visible" width="1" height="1"><text transform="translate(563.50 291.50) scale(1.0 1)" fill="#333" text-anchor="start" style="font-family:'Liberation Serif',serif;font-size:8px;font-weight:normal;white-space:pre;">UTF-8</text></svg>
<svg class="ab" style="left:643.50px;top:285.00px" width="6.8" height="8" viewBox="0 0 10 10" preserveAspectRatio="none"><path d="M5 0.5v1.6M0.8 2.6h8.4M2.6 3.6L8.2 9.6M7.4 3.6L1.4 9.6" fill="none" stroke="#3a3a3a" stroke-width="1.2"/></svg>
<svg class="ab" style="left:650.60px;top:285.00px" width="6.8" height="8" viewBox="0 0 10 10" preserveAspectRatio="none"><path d="M2.4 0.8h5.2v6h-5.2zM2.4 2.8h5.2M2.4 4.8h5.2M0.6 7.2h8.8M3.2 8.2L1.2 9.8M6.8 8.2L8.8 9.8" fill="none" stroke="#3a3a3a" stroke-width="1.2"/></svg>
<svg class="ab" style="left:657.70px;top:285.00px" width="6.8" height="8" viewBox="0 0 10 10" preserveAspectRatio="none"><path d="M1 1h3.4v8H1zM1 5h3.4M5.8 0.5v9M5.8 2.2h3.6M7.6 4.2v5.4M5.8 6h3.8" fill="none" stroke="#3a3a3a" stroke-width="1.2"/></svg>
<svg class="ab" style="left:664.80px;top:285.00px" width="6.8" height="8" viewBox="0 0 10 10" preserveAspectRatio="none"><path d="M3 0.5L1 5M2.2 3.2V9.8M4.4 3h5.2M4 6.2h5.8M7 0.5V9.8" fill="none" stroke="#3a3a3a" stroke-width="1.2"/></svg>
<svg class="ab" style="left:0;top:0;overflow:visible" width="1" height="1"><text transform="translate(672.50 292.00) scale(1.0 1)" fill="#555" text-anchor="start" style="font-family:'Liberation Sans',sans-serif;font-size:8px;font-weight:normal;white-space:pre;">:</text></svg>
<div class="ab" style="left:678px;top:283px;width:22px;height:11px;background:#e6e6e6;border:1px solid #bdbdbd"></div>
<svg class="ab" style="left:0;top:0;overflow:visible" width="1" height="1"><text transform="translate(680.50 291.50) scale(1.0 1)" fill="#333" text-anchor="start" style="font-family:'Liberation Serif',serif;font-size:8px;font-weight:normal;white-space:pre;">8</text></svg>
<svg class="ab" style="left:0;top:0" width="768" height="409"><path d="M548.5 287.5h4.5l-2.25 2.6z" fill="#222"/><path d="M633 287.5h4.5l-2.25 2.6z" fill="#222"/><path d="M691 287.5h4.5l-2.25 2.6z" fill="#222"/></svg>
<div class="ab" style="left:455px;top:299px;width:307px;height:91px;background:#fff;border:1px solid #a6a6a6"></div>
<div class="ab" style="left:456px;top:300px;width:22px;height:89px;background:#a6a6a6;"></div>
<div class="ab" style="left:589px;top:300px;width:1px;height:89px;background:#a6a6a6;"></div>
<div class="ab" style="left:480px;top:301px;width:4.5px;height:10px;background:#9a9a9a;"></div>
<svg class="ab" style="left:0;top:0;overflow:visible" width="1" height="1"><text x="460.25 464.55 468.85 473.15" y="308.80" fill="#2a2a2a" text-anchor="middle" style="font-family:'Liberation Serif',serif;font-size:7.7px;font-weight:normal;white-space:pre;stroke:#2a2a2a;stroke-width:0.2px;">0000</text></svg>
<svg class="ab" style="left:0;top:0;overflow:visible" width="1" height="1"><text x="460.25 464.55 468.85 473.15" y="317.80" fill="#2a2a2a" text-anchor="middle" style="font-family:'Liberation Serif',serif;font-size:7.7px;font-weight:normal;white-space:pre;stroke:#2a2a2a;stroke-width:0.2px;">0008</text></svg>
<svg class="ab" style="left:0;top:0;overflow:visible" width="1" height="1"><text x="460.25 464.55 468.85 473.15" y="326.80" fill="#2a2a2a" text-anchor="middle" style="font-family:'Liberation Serif',serif;font-size:7.7px;font-weight:normal;white-space:pre;stroke:#2a2a2a;stroke-width:0.2px;">0010</text></svg>
<svg class="ab" style="left:0;top:0;overflow:visible" width="1" height="1"><text x="460.25 464.55 468.85 473.15" y="335.80" fill="#2a2a2a" text-anchor="middle" style="font-family:'Liberation Serif',serif;font-size:7.7px;font-weight:normal;white-space:pre;stroke:#2a2a2a;stroke-width:0.2px;">0018</text></svg>
<svg class="ab" style="left:0;top:0;overflow:visible" width="1" height="1"><text x="460.25 464.55 468.85 473.15" y="344.80" fill="#2a2a2a" text-anchor="middle" style="font-family:'Liberation Serif',serif;font-size:7.7px;font-weight:normal;white-space:pre;stroke:#2a2a2a;stroke-width:0.2px;">0020</text></svg>
<svg class="ab" style="left:0;top:0;overflow:visible" width="1" height="1"><text x="460.25 464.55 468.85 473.15" y="353.80" fill="#2a2a2a" text-anchor="middle" style="font-family:'Liberation Serif',serif;font-size:7.7px;font-weight:normal;white-space:pre;stroke:#2a2a2a;stroke-width:0.2px;">0028</text></svg>
<svg class="ab" style="left:0;top:0;overflow:visible" width="1" height="1"><text x="482.66 487.18 496.21 500.73 509.76 514.28 523.31 527.83 536.86 541.38 550.41 554.93 563.96 568.48 577.52 582.03" y="308.80" fill="#4a4a4a" text-anchor="middle" style="font-family:'Liberation Serif',serif;font-size:7.7px;font-weight:normal;white-space:pre;stroke:#4a4a4a;stroke-width:0.12px;">2800000000010400</text></svg>
<svg class="ab" style="left:0;top:0;overflow:visible" width="1" height="1"><text x="596.75 601.25 605.75 610.25 614.75 619.25 623.75 628.25" y="308.80" fill="#4a4a4a" text-anchor="middle" style="font-family:'Liberation Serif',serif;font-size:7.7px;font-weight:normal;white-space:pre;stroke:#4a4a4a;stroke-width:0.12px;">(.......</text></svg>
<svg class="ab" style="left:0;top:0;overflow:visible" width="1" height="1"><text x="482.66 487.18 496.21 500.73 509.76 514.28 523.31 527.83 536.86 541.38 550.41 554.93 563.96 568.48 577.52 582.03" y="317.80" fill="#4a4a4a" text-anchor="middle" style="font-family:'Liberation Serif',serif;font-size:7.7px;font-weight:normal;white-space:pre;stroke:#4a4a4a;stroke-width:0.12px;">0100000000000000</text></svg>
<svg class="ab" style="left:0;top:0;overflow:visible" width="1" height="1"><text x="596.75 601.25 605.75 610.25 614.75 619.25 623.75 628.25" y="317.80" fill="#4a4a4a" text-anchor="middle" style="font-family:'Liberation Serif',serif;font-size:7.7px;font-weight:normal;white-space:pre;stroke:#4a4a4a;stroke-width:0.12px;">........</text></svg>
<svg class="ab" style="left:0;top:0;overflow:visible" width="1" height="1"><text x="482.66 487.18 496.21 500.73 509.76 514.28 523.31 527.83 536.86 541.38 550.41 554.93 563.96 568.48 577.52 582.03" y="326.80" fill="#4a4a4a" text-anchor="middle" style="font-family:'Liberation Serif',serif;font-size:7.7px;font-weight:normal;white-space:pre;stroke:#4a4a4a;stroke-width:0.12px;">000157494e555342</text></svg>
<svg class="ab" style="left:0;top:0;overflow:visible" width="1" height="1"><text x="596.75 601.25 610.25 623.75" y="326.80" fill="#4a4a4a" text-anchor="middle" style="font-family:'Liberation Serif',serif;font-size:7.7px;font-weight:normal;white-space:pre;stroke:#4a4a4a;stroke-width:0.12px;">..IS</text><text transform="translate(605.75 326.80) scale(0.619 1)" fill="#4a4a4a" text-anchor="middle" style="font-family:'Liberation Serif',serif;font-size:7.7px;font-weight:normal;white-space:pre;stroke:#4a4a4a;stroke-width:0.12px;">W</text><text transform="translate(614.75 326.80) scale(0.809 1)" fill="#4a4a4a" text-anchor="middle" style="font-family:'Liberation Serif',serif;font-size:7.7px;font-weight:normal;white-space:pre;stroke:#4a4a4a;stroke-width:0.12px;">N</text><text transform="translate(619.25 326.80) scale(0.809 1)" fill="#4a4a4a" text-anchor="middle" style="font-family:'Liberation Serif',serif;font-size:7.7px;font-weight:normal;white-space:pre;stroke:#4a4a4a;stroke-width:0.12px;">U</text><text transform="translate(628.25 326.80) scale(0.876 1)" fill="#4a4a4a" text-anchor="middle" style="font-family:'Liberation Serif',serif;font-size:7.7px;font-weight:normal;white-space:pre;stroke:#4a4a4a;stroke-width:0.12px;">B</text></svg>
<svg class="ab" style="left:0;top:0;overflow:visible" width="1" height="1"><text x="482.66 487.18 496.21 500.73 509.76 514.28 523.31 527.83 536.86 541.38 550.41 554.93 563.96 568.48 577.52 582.03" y="335.80" fill="#4a4a4a" text-anchor="middle" style="font-family:'Liberation Serif',serif;font-size:7.7px;font-weight:normal;white-space:pre;stroke:#4a4a4a;stroke-width:0.12px;">0000000000000000</text></svg>
<svg class="ab" style="left:0;top:0;overflow:visible" width="1" height="1"><text x="596.75 601.25 605.75 610.25 614.75 619.25 623.75 628.25" y="335.80" fill="#4a4a4a" text-anchor="middle" style="font-family:'Liberation Serif',serif;font-size:7.7px;font-weight:normal;white-space:pre;stroke:#4a4a4a;stroke-width:0.12px;">........</text></svg>
<svg class="ab" style="left:0;top:0;overflow:visible" width="1" height="1"><text x="482.66 487.18 496.21 500.73 509.76 514.28 523.31 527.83 536.86 541.38 550.41 554.93 563.96 568.48 577.52 582.03" y="344.80" fill="#4a4a4a" text-anchor="middle" style="font-family:'Liberation Serif',serif;font-size:7.7px;font-weight:normal;white-space:pre;stroke:#4a4a4a;stroke-width:0.12px;">0000000000000000</text></svg>
<svg class="ab" style="left:0;top:0;overflow:visible" width="1" height="1"><text x="596.75 601.25 605.75 610.25 614.75 619.25 623.75 628.25" y="344.80" fill="#4a4a4a" text-anchor="middle" style="font-family:'Liberation Serif',serif;font-size:7.7px;font-weight:normal;white-space:pre;stroke:#4a4a4a;stroke-width:0.12px;">........</text></svg>
<svg class="ab" style="left:477.00px;top:399.00px" width="7" height="7" viewBox="0 0 10 10" preserveAspectRatio="none"><path d="M1.8 0.4v1.2M0.4 2.2h3L1 6.2M2 4.6v5.2M4.6 0.8h4.6v5.4h-4.6zM6.2 6.2L4.4 9.6M7.6 6.2v3.2h1.8" fill="none" stroke="#333" stroke-width="1.4"/></svg>
<svg class="ab" style="left:484.00px;top:399.00px" width="7" height="7" viewBox="0 0 10 10" preserveAspectRatio="none"><path d="M0.6 2h8.8M5 0.4v1.6M2 3.6h6v2.4H2zM1 7.4h8M3 9.6L5 7.6L7 9.6" fill="none" stroke="#333" stroke-width="1.4"/></svg>
<svg class="ab" style="left:491.00px;top:399.00px" width="7" height="7" viewBox="0 0 10 10" preserveAspectRatio="none"><path d="M1.2 1.4h7.6M5 1.4v7.2M0.6 8.6h8.8" fill="none" stroke="#333" stroke-width="1.4"/></svg>
<svg class="ab" style="left:0;top:0;overflow:visible" width="1" height="1"><text x="499.80 510.60" y="405.60" fill="#333" text-anchor="middle" style="font-family:'Liberation Serif',serif;font-size:7.6px;font-weight:normal;white-space:pre;stroke:#333;stroke-width:0.12px;">:,</text><text transform="translate(507.00 405.60) scale(0.947 1)" fill="#333" text-anchor="middle" style="font-family:'Liberation Serif',serif;font-size:7.6px;font-weight:normal;white-space:pre;stroke:#333;stroke-width:0.12px;">0</text></svg>
<svg class="ab" style="left:514.00px;top:399.00px" width="6.8" height="7" viewBox="0 0 10 10" preserveAspectRatio="none"><path d="M0.8 0.8h8.4v8.6h-8.4zM3 2.4h4L3 6M4 4.2L7.2 6.4M3.8 7.6h2.6" fill="none" stroke="#333" stroke-width="1.4"/></svg>
<svg class="ab" style="left:520.80px;top:399.00px" width="6.8" height="7" viewBox="0 0 10 10" preserveAspectRatio="none"><path d="M5 0.5v1.6M0.8 2.6h8.4M2.6 3.6L8.2 9.6M7.4 3.6L1.4 9.6" fill="none" stroke="#333" stroke-width="1.4"/></svg>
<svg class="ab" style="left:527.60px;top:399.00px" width="6.8" height="7" viewBox="0 0 10 10" preserveAspectRatio="none"><path d="M2.4 0.8h5.2v6h-5.2zM2.4 2.8h5.2M2.4 4.8h5.2M0.6 7.2h8.8M3.2 8.2L1.2 9.8M6.8 8.2L8.8 9.8" fill="none" stroke="#333" stroke-width="1.4"/></svg>
<svg class="ab" style="left:534.40px;top:399.00px" width="6.8" height="7" viewBox="0 0 10 10" preserveAspectRatio="none"><path d="M1 1h3.4v8H1zM1 5h3.4M5.8 0.5v9M5.8 2.2h3.6M7.6 4.2v5.4M5.8 6h3.8" fill="none" stroke="#333" stroke-width="1.4"/></svg>
<svg class="ab" style="left:0;top:0;overflow:visible" width="1" height="1"><text transform="translate(546.55 405.60) scale(0.921 1)" fill="#333" text-anchor="middle" style="font-family:'Liberation Serif',serif;font-size:7.6px;font-weight:normal;white-space:pre;stroke:#333;stroke-width:0.12px;">1</text><text transform="translate(553.55 405.60) scale(0.518 1)" fill="#333" text-anchor="middle" style="font-family:'Liberation Serif',serif;font-size:7.6px;font-weight:normal;white-space:pre;stroke:#333;stroke-width:0.12px;">M</text><text transform="translate(557.05 405.60) scale(0.690 1)" fill="#333" text-anchor="middle" style="font-family:'Liberation Serif',serif;font-size:7.6px;font-weight:normal;white-space:pre;stroke:#333;stroke-width:0.12px;">B</text></svg>
<div class="ab" style="left:560.2px;top:397px;width:1px;height:10px;background:#d4d4d4;"></div>
<svg class="ab" style="left:561.80px;top:399.00px" width="6.6" height="7" viewBox="0 0 10 10" preserveAspectRatio="none"><path d="M3 0.5L1 5M2.2 3.2V9.8M4.4 3h5.2M4 6.2h5.8M7 0.5V9.8" fill="none" stroke="#333" stroke-width="1.4"/></svg>
<svg class="ab" style="left:568.40px;top:399.00px" width="6.6" height="7" viewBox="0 0 10 10" preserveAspectRatio="none"><path d="M1.8 0.4v1.2M0.4 2.2h3L1 6.2M2 4.6v5.2M4.6 0.8h4.6v5.4h-4.6zM6.2 6.2L4.4 9.6M7.6 6.2v3.2h1.8" fill="none" stroke="#333" stroke-width="1.4"/></svg>
<svg class="ab" style="left:0;top:0;overflow:visible" width="1" height="1"><text x="576.70 593.70" y="405.60" fill="#333" text-anchor="middle" style="font-family:'Liberation Serif',serif;font-size:7.6px;font-weight:normal;white-space:pre;stroke:#333;stroke-width:0.12px;">:.</text><text transform="translate(583.50 405.60) scale(0.895 1)" fill="#333" text-anchor="middle" style="font-family:'Liberation Serif',serif;font-size:7.6px;font-weight:normal;white-space:pre;stroke:#333;stroke-width:0.12px;">1</text><text transform="translate(586.90 405.60) scale(0.895 1)" fill="#333" text-anchor="middle" style="font-family:'Liberation Serif',serif;font-size:7.6px;font-weight:normal;white-space:pre;stroke:#333;stroke-width:0.12px;">6</text><text transform="translate(590.30 405.60) scale(0.895 1)" fill="#333" text-anchor="middle" style="font-family:'Liberation Serif',serif;font-size:7.6px;font-weight:normal;white-space:pre;stroke:#333;stroke-width:0.12px;">6</text></svg>
<svg class="ab" style="left:599.00px;top:399.00px" width="7" height="7" viewBox="0 0 10 10" preserveAspectRatio="none"><path d="M0.6 2h8.8M5 0.4v1.6M2 3.6h6v2.4H2zM1 7.4h8M3 9.6L5 7.6L7 9.6" fill="none" stroke="#333" stroke-width="1.4"/></svg>
<svg class="ab" style="left:606.00px;top:399.00px" width="7" height="7" viewBox="0 0 10 10" preserveAspectRatio="none"><path d="M1.2 1.4h7.6M5 1.4v7.2M0.6 8.6h8.8" fill="none" stroke="#333" stroke-width="1.4"/></svg>
<svg class="ab" style="left:0;top:0;overflow:visible" width="1" height="1"><text x="614.67 631.42" y="405.60" fill="#333" text-anchor="middle" style="font-family:'Liberation Serif',serif;font-size:7.6px;font-weight:normal;white-space:pre;stroke:#333;stroke-width:0.12px;">:.</text><text transform="translate(621.38 405.60) scale(0.882 1)" fill="#333" text-anchor="middle" style="font-family:'Liberation Serif',serif;font-size:7.6px;font-weight:normal;white-space:pre;stroke:#333;stroke-width:0.12px;">1</text><text transform="translate(624.73 405.60) scale(0.882 1)" fill="#333" text-anchor="middle" style="font-family:'Liberation Serif',serif;font-size:7.6px;font-weight:normal;white-space:pre;stroke:#333;stroke-width:0.12px;">6</text><text transform="translate(628.08 405.60) scale(0.882 1)" fill="#333" text-anchor="middle" style="font-family:'Liberation Serif',serif;font-size:7.6px;font-weight:normal;white-space:pre;stroke:#333;stroke-width:0.12px;">6</text></svg>
<svg class="ab" style="left:636.10px;top:399.00px" width="7" height="7" viewBox="0 0 10 10" preserveAspectRatio="none"><path d="M0.8 0.8h8.4v8.6h-8.4zM3 2.4h4L3 6M4 4.2L7.2 6.4M3.8 7.6h2.6" fill="none" stroke="#333" stroke-width="1.4"/></svg>
<svg class="ab" style="left:643.10px;top:399.00px" width="7" height="7" viewBox="0 0 10 10" preserveAspectRatio="none"><path d="M5 0.5v1.6M0.8 2.6h8.4M2.6 3.6L8.2 9.6M7.4 3.6L1.4 9.6" fill="none" stroke="#333" stroke-width="1.4"/></svg>
<svg class="ab" style="left:0;top:0;overflow:visible" width="1" height="1"><text x="651.88 668.62" y="405.60" fill="#333" text-anchor="middle" style="font-family:'Liberation Serif',serif;font-size:7.6px;font-weight:normal;white-space:pre;stroke:#333;stroke-width:0.12px;">:.</text><text transform="translate(658.58 405.60) scale(0.882 1)" fill="#333" text-anchor="middle" style="font-family:'Liberation Serif',serif;font-size:7.6px;font-weight:normal;white-space:pre;stroke:#333;stroke-width:0.12px;">1</text><text transform="translate(661.93 405.60) scale(0.882 1)" fill="#333" text-anchor="middle" style="font-family:'Liberation Serif',serif;font-size:7.6px;font-weight:normal;white-space:pre;stroke:#333;stroke-width:0.12px;">6</text><text transform="translate(665.28 405.60) scale(0.882 1)" fill="#333" text-anchor="middle" style="font-family:'Liberation Serif',serif;font-size:7.6px;font-weight:normal;white-space:pre;stroke:#333;stroke-width:0.12px;">6</text></svg>
<div class="ab" style="left:671.7px;top:397px;width:1px;height:10px;background:#d4d4d4;"></div>
<div class="ab" style="left:697px;top:397px;width:1px;height:10px;background:#d4d4d4;"></div>
<div class="ab" style="left:700px;top:399px;width:39px;height:6px;background:#06b025;"></div>
<svg class="ab" style="left:0;top:0;overflow:visible" width="1" height="1"><text transform="translate(742.73 405.40) scale(0.932 1)" fill="#333" text-anchor="middle" style="font-family:'Liberation Serif',serif;font-size:7.4px;font-weight:normal;white-space:pre;stroke:#333;stroke-width:0.2px;">1</text><text transform="translate(746.17 405.40) scale(0.932 1)" fill="#333" text-anchor="middle" style="font-family:'Liberation Serif',serif;font-size:7.4px;font-weight:normal;white-space:pre;stroke:#333;stroke-width:0.2px;">0</text><text transform="translate(749.62 405.40) scale(0.932 1)" fill="#333" text-anchor="middle" style="font-family:'Liberation Serif',serif;font-size:7.4px;font-weight:normal;white-space:pre;stroke:#333;stroke-width:0.2px;">0</text><text transform="translate(753.08 405.40) scale(0.560 1)" fill="#333" text-anchor="middle" style="font-family:'Liberation Serif',serif;font-size:7.4px;font-weight:normal;white-space:pre;stroke:#333;stroke-width:0.2px;">%</text></svg>
<svg class="ab" style="left:758px;top:400px" width="10" height="9"><g fill="#b8b8b8"><rect x="6" y="1" width="1" height="1"/><rect x="4" y="3" width="1" height="1"/><rect x="6" y="3" width="1" height="1"/><rect x="2" y="5" width="1" height="1"/><rect x="4" y="5" width="1" height="1"/><rect x="6" y="5" width="1" height="1"/></g></svg>
</body></html>
